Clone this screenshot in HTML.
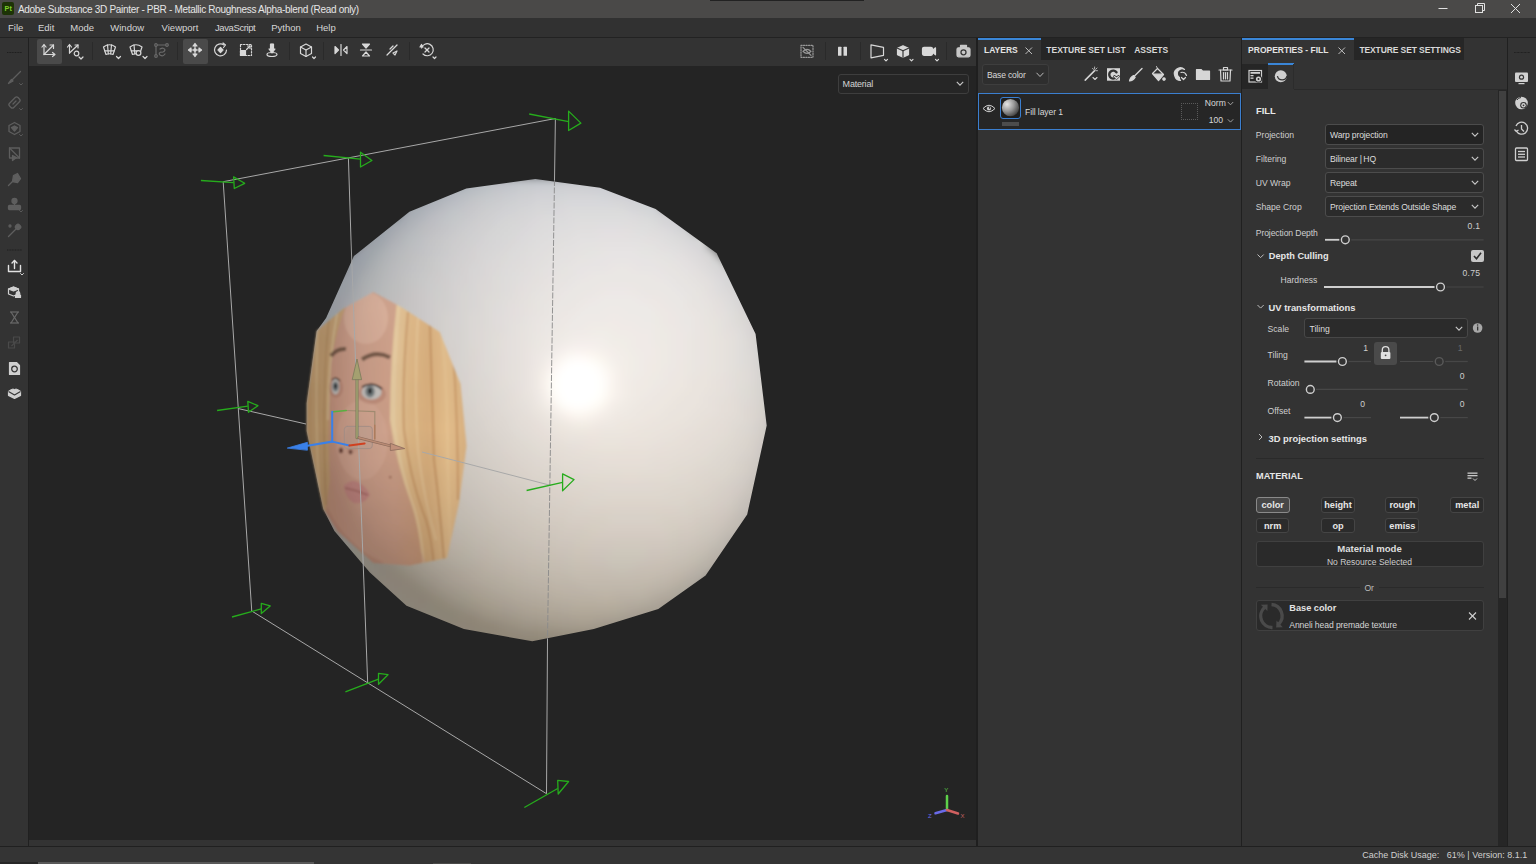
<!DOCTYPE html>
<html><head><meta charset="utf-8">
<style>
*{box-sizing:border-box;margin:0;padding:0}
html,body{width:1536px;height:864px;overflow:hidden;background:#333;font-family:"Liberation Sans",sans-serif;color:#d0d0d0}
.a{position:absolute}
.t{position:absolute;white-space:nowrap;line-height:1}
svg{position:absolute;overflow:visible}
</style></head><body>
<!-- title bar -->
<div class="a" style="left:0;top:0;width:1536px;height:18px;background:#4a4948"></div>
<div class="a" style="left:710px;top:0;width:154px;height:1px;background:#222"></div>
<div class="a" style="left:2px;top:2.3px;width:12px;height:12.3px;background:#1d3306;border-radius:2px"></div>
<div class="t" style="left:4.6px;top:4.8px;font-size:7.2px;font-weight:700;color:#7fd02a;letter-spacing:0.2px">Pt</div>
<div class="t" style="left:18px;top:5px;font-size:10px;color:#e6e6e6;letter-spacing:-0.31px">Adobe Substance 3D Painter - PBR - Metallic Roughness Alpha-blend (Read only)</div>
<!-- menu bar -->
<div class="a" style="left:0;top:18px;width:1536px;height:19px;background:#313131"></div>
<div class="a" style="left:0;top:37px;width:1536px;height:1px;background:#222"></div>
<div class="t" style="left:8px;top:23.2px;font-size:9.5px;color:#d6d6d6">File</div>
<div class="t" style="left:38px;top:23.2px;font-size:9.5px;color:#d6d6d6">Edit</div>
<div class="t" style="left:70.3px;top:23.2px;font-size:9.5px;color:#d6d6d6">Mode</div>
<div class="t" style="left:110.3px;top:23.2px;font-size:9.5px;color:#d6d6d6">Window</div>
<div class="t" style="left:161.6px;top:23.2px;font-size:9.5px;color:#d6d6d6">Viewport</div>
<div class="t" style="left:215px;top:23.2px;font-size:9.5px;color:#d6d6d6;letter-spacing:-0.4px">JavaScript</div>
<div class="t" style="left:271.2px;top:23.2px;font-size:9.5px;color:#d6d6d6">Python</div>
<div class="t" style="left:316.2px;top:23.2px;font-size:9.5px;color:#d6d6d6">Help</div>
<!-- window controls -->
<svg style="left:0;top:0" width="1536" height="18">
<g stroke="#e0e0e0" stroke-width="1" fill="none">
<line x1="1438.5" y1="8.5" x2="1447.5" y2="8.5"/>
<rect x="1475.5" y="5.5" width="7" height="7"/><polyline points="1477.5,5.5 1477.5,3.5 1484.5,3.5 1484.5,10.5 1482.5,10.5"/>
<line x1="1511" y1="4" x2="1520" y2="13"/><line x1="1520" y1="4" x2="1511" y2="13"/>
</g></svg>

<!-- left toolbar -->
<div class="a" style="left:0;top:38px;width:28px;height:808px;background:#333"></div>
<div class="a" style="left:28px;top:38px;width:1px;height:808px;background:#202020"></div>
<svg style="left:0;top:38px" width="28" height="400" viewBox="0 38 28 400">
<g stroke="#1e1e1e" stroke-width="1" stroke-dasharray="1,0.6"><line x1="7" y1="52.5" x2="22" y2="52.5"/><line x1="7" y1="250" x2="22" y2="250"/></g>
<g stroke="#5e5e5e" fill="none" stroke-width="1.3" stroke-linecap="round" stroke-linejoin="round">
<g transform="translate(14.5,77.5)"><line x1="-3" y1="3" x2="6" y2="-6"/><polygon points="-6,6 -3,2 -1.5,3.5" fill="#5e5e5e"/><polyline points="5,6 6.5,7.5 8,6" stroke-width="0.9"/></g>
<g transform="translate(14.5,102.5)"><rect x="-3" y="-6" width="6" height="12" rx="2" transform="rotate(45)"/><line x1="-1.5" y1="-1.5" x2="1.5" y2="1.5" transform="rotate(90)"/><polyline points="5,6 6.5,7.5 8,6" stroke-width="0.9"/></g>
<g transform="translate(14.5,128.5)"><polygon points="0,-6 5.5,-3 5.5,3 0,6 -5.5,3 -5.5,-3"/><polygon points="0,-2.5 3,-1 0,2.5 -3,-1" fill="#5e5e5e"/><polyline points="5,6 6.5,7.5 8,6" stroke-width="0.9"/></g>
<g transform="translate(14.5,153.5)"><rect x="-5" y="-5.5" width="10" height="10"/><line x1="-5" y1="-5.5" x2="5" y2="4.5"/><polygon points="-2,2 -2,7 2,4" fill="#5e5e5e"/></g>
<g transform="translate(14.5,179.5)"><polygon points="-1,-4 3,-6 6,-1 3,3 -2,2" fill="#5e5e5e"/><line x1="-2" y1="2" x2="-6" y2="6"/></g>
<g transform="translate(14.5,204.5)"><circle cx="0" cy="-3.5" r="2.5" fill="#5e5e5e"/><rect x="-6" y="1" width="12" height="4" rx="1" fill="#5e5e5e"/><line x1="0" y1="-1" x2="0" y2="1"/><polyline points="5,6 6.5,7.5 8,6" stroke-width="0.9"/></g>
<g transform="translate(14.5,230.5)"><line x1="-6" y1="6" x2="2" y2="-2"/><rect x="1" y="-6" width="5" height="5" rx="2" fill="#5e5e5e" transform="rotate(45 3.5 -3.5)"/><circle cx="-4.5" cy="-4.5" r="1"/></g>
</g>
<g stroke="#e2e2e2" fill="none" stroke-width="1.4" stroke-linecap="round" stroke-linejoin="round">
<g transform="translate(14.5,266.5)"><polyline points="-6,-1 -6,5 6,5 6,-1"/><line x1="0" y1="2" x2="0" y2="-6"/><polyline points="-2.5,-3.5 0,-6 2.5,-3.5"/><polyline points="6,7 7.5,8.5 9,7" stroke-width="0.9"/></g>
</g>
<g stroke="#d0d0d0" fill="#d0d0d0" stroke-width="1.2" stroke-linejoin="round">
<g transform="translate(14.5,292)"><polygon points="-6,-3 -1,-5 4,-3 4,2 -1,4 -6,2" fill="none"/><polygon points="-6,-3 -1,-5 4,-3 -1,-1"/><circle cx="3.5" cy="1.5" r="1.8"/><rect x="1" y="3" width="5" height="2.5"/></g>
<g transform="translate(14.5,317.5)" stroke="#6a6a6a" fill="none"><line x1="-4.5" y1="-5.5" x2="4.5" y2="-5.5"/><line x1="-4.5" y1="5.5" x2="4.5" y2="5.5"/><polyline points="-3.5,-5.5 3.5,5.5"/><polyline points="3.5,-5.5 -3.5,5.5"/></g>
<g transform="translate(14.5,343)" stroke="#4a4a4a" fill="none"><rect x="-6" y="-1" width="6" height="6"/><rect x="-1" y="-6" width="6" height="6"/><line x1="-3" y1="3" x2="3" y2="-3"/></g>
<g transform="translate(14.5,368.5)" fill="none"><path d="M-5,-6 L2,-6 L5,-3 L5,6 L-5,6 Z" fill="#d0d0d0"/><circle cx="0" cy="0.5" r="2.8" stroke="#373737" stroke-width="1.3"/></g>
<g transform="translate(14.5,393.5)"><path d="M-6,-2 Q-1,-6 0,-3 Q1,-6 6,-2 L6,2 L0,5 L-6,2 Z"/><path d="M-6,-2 L0,1.5 L6,-2" stroke="#373737" fill="none"/></g>
</g>
</svg>
<!-- top toolbar -->
<div class="a" style="left:29px;top:38px;width:947px;height:28px;background:#333"></div>
<div class="a" style="left:37px;top:38.5px;width:25px;height:25.5px;background:#4a4a4a;border-radius:2px"></div>
<div class="a" style="left:182.5px;top:38.5px;width:25px;height:25.5px;background:#4a4a4a;border-radius:2px"></div>
<svg style="left:0;top:38px" width="1536" height="28" viewBox="0 38 1536 28">
<g stroke="#2a2a2a" stroke-width="1">
<line x1="92.5" y1="42" x2="92.5" y2="60"/><line x1="177.5" y1="42" x2="177.5" y2="60"/>
<line x1="289.5" y1="42" x2="289.5" y2="60"/><line x1="323.5" y1="42" x2="323.5" y2="60"/>
<line x1="409.5" y1="42" x2="409.5" y2="60"/>
<line x1="825.5" y1="42" x2="825.5" y2="60"/><line x1="860.5" y1="42" x2="860.5" y2="60"/>
<line x1="946.5" y1="42" x2="946.5" y2="60"/>
</g>
<g stroke="#d8d8d8" stroke-width="1.2" fill="none" stroke-linecap="round" stroke-linejoin="round">
<!-- 1 transform -->
<g transform="translate(48.5,50)"><polyline points="-4.5,-5 -4.5,4.5 6,4.5"/><line x1="-4.5" y1="4.5" x2="5" y2="-5"/><polyline points="-6.5,-3 -4.5,-5.5 -2.5,-3"/><polyline points="4,2.5 6.5,4.5 4,6.5"/><polyline points="1.5,-5 5,-5 5,-1.5"/></g>
<!-- 2 -->
<g transform="translate(75,50)"><polyline points="-5.5,-5 -5.5,3"/><line x1="-5.5" y1="3" x2="3" y2="-5"/><polyline points="-7.5,-3 -5.5,-5.5 -3.5,-3"/><polyline points="0,-5 3,-5 3,-2"/><circle cx="1.5" cy="3.5" r="2.3"/><polyline points="4,7 6,9 8,7"/></g>
<!-- 3 uv fan -->
<g transform="translate(109.5,50)"><path d="M-6,-3 Q0,-7.5 6,-3 L3.5,4.5 Q0,3 -3.5,4.5 Z"/><line x1="-2" y1="-5.2" x2="-1.2" y2="3.8"/><line x1="2" y1="-5.2" x2="1.2" y2="3.8"/><line x1="-4.8" y1="0.8" x2="4.8" y2="0.8"/><polyline points="7,6.5 9,8.5 11,6.5"/></g>
<!-- 4 -->
<g transform="translate(136,50)"><path d="M-6,-3 Q0,-7.5 6,-3 L3.5,4.5 Q0,3 -3.5,4.5 Z"/><line x1="-2" y1="-5.2" x2="-1.2" y2="3.8"/><line x1="-4.8" y1="0.8" x2="2" y2="0.8"/><circle cx="2.5" cy="3" r="2.4" fill="#353535"/><polyline points="7,6.5 9,8.5 11,6.5"/></g>
<!-- 5 dim path -->
<g transform="translate(161,50)" stroke="#6a6a6a"><circle cx="-5" cy="-5" r="1.3"/><circle cx="6" cy="-5" r="1.3"/><circle cx="-5" cy="6" r="1.3"/><line x1="-3.5" y1="-5" x2="4.5" y2="-5"/><line x1="-5" y1="-3.5" x2="-5" y2="4.5"/><path d="M-1,-1 Q3,-3 4,0 Q3,3 0,2 Q-3,3 -1,5 Q2,7 4,4"/></g>
<!-- 6 move -->
<g transform="translate(195,50)"><line x1="-6" y1="0" x2="6" y2="0"/><line x1="0" y1="-6" x2="0" y2="6"/><polygon points="-6.5,0 -4,-2 -4,2" fill="#d8d8d8"/><polygon points="6.5,0 4,-2 4,2" fill="#d8d8d8"/><polygon points="0,-6.5 -2,-4 2,-4" fill="#d8d8d8"/><polygon points="0,6.5 -2,4 2,4" fill="#d8d8d8"/><circle cx="0" cy="0" r="1.2" fill="#d8d8d8"/></g>
<!-- 7 rotate -->
<g transform="translate(220.5,50)"><path d="M3.5,-5 A6,6 0 1 0 6,0"/><polyline points="2.5,-7 5,-5 3,-2.5"/><polygon points="0,-2.5 2.5,0 0,2.5 -2.5,0" fill="#d8d8d8"/></g>
<!-- 8 scale -->
<g transform="translate(246,50)"><rect x="-5.5" y="-5.5" width="11" height="11" stroke-dasharray="1.5,1.5"/><rect x="-5.5" y="0.5" width="5" height="5" fill="#d8d8d8"/><line x1="0.5" y1="-0.5" x2="4" y2="-4"/><polyline points="1.5,-4 4,-4 4,-1.5"/></g>
<!-- 9 download -->
<g transform="translate(272,50)"><line x1="0" y1="-6" x2="0" y2="1"/><polygon points="-3,-1 3,-1 0,3" fill="#d8d8d8"/><rect x="-1.5" y="-6" width="3" height="5" fill="#d8d8d8"/><ellipse cx="0" cy="4.5" rx="5" ry="2"/></g>
<!-- 10 cube -->
<g transform="translate(306,50)"><polygon points="0,-6 5.5,-3 5.5,3.5 0,6.5 -5.5,3.5 -5.5,-3"/><polyline points="-5.5,-3 0,0 5.5,-3"/><line x1="0" y1="0" x2="0" y2="6.5"/><polyline points="6.5,7 8,8.5 9.5,7"/></g>
<!-- 11 mirror -->
<g transform="translate(341,50)"><polygon points="-6,-3.5 -2.5,0 -6,3.5" fill="#d8d8d8"/><line x1="0" y1="-5.5" x2="0" y2="5.5"/><polygon points="6,-3.5 2.5,0 6,3.5"/></g>
<!-- 12 -->
<g transform="translate(366,50)"><polygon points="-3.5,-6 3.5,-6 0,-2" fill="#d8d8d8"/><line x1="-5.5" y1="0" x2="5.5" y2="0"/><polygon points="-3.5,6 3.5,6 0,2"/></g>
<!-- 13 -->
<g transform="translate(392,50)"><line x1="-5" y1="5" x2="5" y2="-5"/><line x1="-2" y1="-1" x2="1" y2="-4"/><polygon points="1,3 5,1 3,5"/></g>
<!-- 14 clock-x -->
<g transform="translate(427,50)"><path d="M-5.5,-2 A6,6 0 1 1 -4,4"/><polygon points="-7,-3 -4,-3 -5.5,-5.5" fill="#d8d8d8"/><line x1="-2" y1="-2" x2="2" y2="2"/><line x1="2" y1="-2" x2="-2" y2="2"/><polyline points="6,7 7.5,8.5 9,7"/></g>
<!-- right side -->
<g transform="translate(807,51.3)" stroke="#9a9a9a"><rect x="-6" y="-6" width="12" height="12" stroke-dasharray="1.2,1.3"/><path d="M-4,0 Q0,-4 4,0 Q0,4 -4,0"/><line x1="-4" y1="-4" x2="4" y2="4"/></g>
<g transform="translate(842.5,51.3)" fill="#d8d8d8" stroke="none"><rect x="-4.5" y="-4.5" width="3.5" height="9" rx="0.5"/><rect x="1" y="-4.5" width="3.5" height="9" rx="0.5"/></g>
<g transform="translate(877.5,51.3)"><polygon points="-6.5,-6.5 6,-4 6,4 -6.5,6.5"/><polyline points="7,8 8.5,9.5 10,8"/></g>
<g transform="translate(903,51.3)"><polygon points="0,-5.5 5.5,-3 5.5,3.5 0,6 -5.5,3.5 -5.5,-3" fill="#d8d8d8"/><polyline points="-5.5,-3 0,-0.5 5.5,-3" stroke="#353535"/><line x1="0" y1="-0.5" x2="0" y2="6" stroke="#353535"/><polyline points="7,8 8.5,9.5 10,8"/></g>
<g transform="translate(928.5,51.3)"><rect x="-6" y="-4" width="10" height="8" rx="1.5" fill="#d8d8d8"/><polygon points="4,-1 7,-3.5 7,3.5 4,1" fill="#d8d8d8"/><polyline points="7,8 8.5,9.5 10,8"/></g>
<g transform="translate(963.5,51.3)"><rect x="-6.5" y="-3.5" width="13" height="9" rx="1.5" fill="#c8c8c8" stroke="#c8c8c8"/><rect x="-3" y="-6" width="6" height="3" fill="#c8c8c8" stroke="#c8c8c8"/><circle cx="0" cy="1" r="2.5" stroke="#353535" stroke-width="1.3"/></g>
</g>
</svg>
<!-- viewport -->
<div class="a" style="left:29px;top:66px;width:947px;height:774px;background:#242424"></div>
<div class="a" style="left:29px;top:840px;width:947px;height:6px;background:#333"></div>
<!--VP_START-->
<svg style="left:0;top:0" width="1536" height="864" viewBox="0 0 1536 864">
<defs>
<linearGradient id="sbase" gradientUnits="userSpaceOnUse" x1="390" y1="230" x2="690" y2="610">
<stop offset="0" stop-color="#c6c7ca"/>
<stop offset="0.4" stop-color="#d3d2d0"/>
<stop offset="0.75" stop-color="#dcd6ce"/>
<stop offset="1" stop-color="#d8d0c6"/>
</linearGradient>
<radialGradient id="shl" gradientUnits="userSpaceOnUse" cx="578" cy="386" r="240">
<stop offset="0" stop-color="#ffffff" stop-opacity="1"/>
<stop offset="0.07" stop-color="#fffef9" stop-opacity="1"/>
<stop offset="0.13" stop-color="#fdf8ee" stop-opacity="0.8"/>
<stop offset="0.22" stop-color="#f8f2e8" stop-opacity="0.6"/>
<stop offset="0.45" stop-color="#f0eae2" stop-opacity="0.38"/>
<stop offset="0.75" stop-color="#ece6de" stop-opacity="0.16"/>
<stop offset="1" stop-color="#e8e2da" stop-opacity="0"/>
</radialGradient>
<radialGradient id="sdark" gradientUnits="userSpaceOnUse" cx="420" cy="600" r="150">
<stop offset="0" stop-color="#a8a4a0" stop-opacity="0.35"/>
<stop offset="0.6" stop-color="#a8a4a0" stop-opacity="0.15"/>
<stop offset="1" stop-color="#a8a4a0" stop-opacity="0"/>
</radialGradient>
<radialGradient id="srim" gradientUnits="userSpaceOnUse" cx="536" cy="410" r="232">
<stop offset="0.86" stop-color="#dfe4ee" stop-opacity="0"/>
<stop offset="0.95" stop-color="#dfe4ee" stop-opacity="0.35"/>
<stop offset="1" stop-color="#d8deea" stop-opacity="0.55"/>
</radialGradient>
<linearGradient id="rimmask" gradientUnits="userSpaceOnUse" x1="400" y1="180" x2="560" y2="520">
<stop offset="0" stop-color="#fff"/>
<stop offset="0.5" stop-color="#fff" stop-opacity="0.7"/>
<stop offset="1" stop-color="#fff" stop-opacity="0"/>
</linearGradient>
<mask id="rmask" maskUnits="userSpaceOnUse" x="280" y="160" width="520" height="500"><rect x="280" y="160" width="520" height="500" fill="url(#rimmask)"/></mask>
<linearGradient id="fskin" gradientUnits="userSpaceOnUse" x1="305" y1="0" x2="467" y2="0">
<stop offset="0" stop-color="#c49a70"/>
<stop offset="0.18" stop-color="#cf9c86"/>
<stop offset="0.35" stop-color="#d6a690"/>
<stop offset="0.55" stop-color="#d4a48c"/>
<stop offset="0.7" stop-color="#cc9c7c"/>
<stop offset="1" stop-color="#c49870"/>
</linearGradient>
<linearGradient id="fvert" gradientUnits="userSpaceOnUse" x1="0" y1="293" x2="0" y2="566">
<stop offset="0" stop-color="#ffffff" stop-opacity="0.06"/>
<stop offset="0.5" stop-color="#000000" stop-opacity="0"/>
<stop offset="1" stop-color="#604030" stop-opacity="0.1"/>
</linearGradient>
<linearGradient id="hairR" gradientUnits="userSpaceOnUse" x1="390" y1="0" x2="466" y2="0">
<stop offset="0" stop-color="#ecd0a4"/>
<stop offset="0.25" stop-color="#dfb886"/>
<stop offset="0.5" stop-color="#d8ae7c"/>
<stop offset="0.75" stop-color="#e2bc8a"/>
<stop offset="1" stop-color="#d8b080"/>
</linearGradient>
<clipPath id="fclip"><polygon points="373.3,292.0 401.1,307.0 439.7,332.0 460.5,384.0 466.5,446.0 459.0,503.0 447.0,558.0 409.4,565.6 373.3,563.0 337.2,531.1 323.3,508.9 306.7,431.1 306.7,403.3 316.7,331.1 342.8,308.9"/></clipPath>
<filter id="blur1" x="-10%" y="-10%" width="120%" height="120%"><feGaussianBlur stdDeviation="0.9"/></filter>
<filter id="blur2" x="-10%" y="-10%" width="120%" height="120%"><feGaussianBlur stdDeviation="1.6"/></filter>
<clipPath id="vpc"><rect x="29" y="66" width="947" height="774"/></clipPath>
</defs>
<g clip-path="url(#vpc)">
<clipPath id="sclip"><polygon points="535.3,178.9 600.0,187.8 655.6,208.9 716.7,253.3 755.6,333.9 766.7,425.6 747.2,514.4 705.6,575.6 658.3,608.9 593.8,629.0 532.3,641.3 463.9,629.0 406.5,605.8 369.9,572.6 334.4,531.1 323.3,508.9 306.7,431.1 306.7,403.3 316.7,331.1 326.1,318.0 353.9,256.1 409.4,211.7 466.3,188.5"/></clipPath><filter id="sblur" x="280" y="150" width="520" height="520" filterUnits="userSpaceOnUse"><feGaussianBlur stdDeviation="5"/></filter>
<g clip-path="url(#sclip)"><g filter="url(#sblur)"><path fill="#b4bac0" d="M462 176h8v8h-8zM470 184h8v8h-8z"/><path fill="#b7bac0" d="M470 176h8v8h-8zM454 192h8v8h-8zM430 208h8v8h-8zM422 216h8v8h-8z"/><path fill="#b7bdc3" d="M478 176h8v8h-8z"/><path fill="#babdc3" d="M486 176h8v8h-8zM478 184h8v8h-8zM446 200h8v8h-8z"/><path fill="#babdc6" d="M494 176h8v8h-8z"/><path fill="#bdc0c6" d="M502 176h16v8h-16zM454 200h8v8h-8z"/><path fill="#c0c3c9" d="M518 176h16v8h-16z"/><path fill="#c0c6cc" d="M534 176h8v8h-8z"/><path fill="#c3c6cc" d="M542 176h16v8h-16zM502 184h8v8h-8z"/><path fill="#c6c9cf" d="M558 176h24v8h-24z"/><path fill="#c9cccf" d="M582 176h8v8h-8zM518 184h16v8h-16zM502 192h8v8h-8zM486 200h8v8h-8z"/><path fill="#c9ccd2" d="M590 176h16v8h-16z"/><path fill="#ccccd2" d="M606 176h8v8h-8zM534 184h8v8h-8zM590 184h16v8h-16zM510 192h8v8h-8z"/><path fill="#aeb4ba" d="M438 184h8v8h-8zM438 192h8v8h-8z"/><path fill="#b1b4bd" d="M446 184h8v8h-8zM446 192h8v8h-8z"/><path fill="#b1b7bd" d="M454 184h8v8h-8z"/><path fill="#b4b7c0" d="M462 184h8v8h-8z"/><path fill="#bdc3c6" d="M486 184h8v8h-8z"/><path fill="#c3c3c9" d="M494 184h8v8h-8zM462 200h8v8h-8z"/><path fill="#c6c9cc" d="M510 184h8v8h-8zM486 192h8v8h-8z"/><path fill="#cccfd2" d="M542 184h16v8h-16zM582 184h8v8h-8zM606 184h24v8h-24z"/><path fill="#cfcfd2" d="M558 184h24v8h-24zM518 192h16v8h-16zM502 200h8v8h-8zM494 208h8v8h-8zM486 216h8v8h-8zM470 232h8v8h-8z"/><path fill="#cfcfd5" d="M630 184h8v8h-8zM614 192h24v8h-24z"/><path fill="#abb1b7" d="M422 192h8v8h-8zM430 200h8v8h-8z"/><path fill="#aeb1ba" d="M430 192h8v8h-8z"/><path fill="#bac0c3" d="M462 192h8v8h-8z"/><path fill="#c0c3c6" d="M470 192h8v8h-8zM446 208h8v8h-8zM438 216h8v8h-8z"/><path fill="#c3c6c9" d="M478 192h8v8h-8zM454 208h8v8h-8zM446 216h8v8h-8z"/><path fill="#c9c9cc" d="M494 192h8v8h-8zM478 200h8v8h-8zM470 208h8v8h-8zM462 216h8v8h-8zM454 224h8v8h-8zM446 232h8v8h-8zM438 248h8v8h-8z"/><path fill="#d2d2d5" d="M534 192h24v8h-24zM606 192h8v8h-8zM518 200h16v8h-16zM630 200h8v8h-8zM654 200h8v8h-8zM502 208h16v8h-16zM654 208h24v8h-24zM494 216h8v8h-8zM662 216h24v8h-24zM678 224h8v8h-8z"/><path fill="#d2d5d8" d="M558 192h8v8h-8zM598 192h8v8h-8zM646 208h8v8h-8z"/><path fill="#d5d5d8" d="M566 192h32v8h-32zM534 200h24v8h-24zM622 200h8v8h-8zM526 208h8v8h-8zM670 224h8v8h-8z"/><path fill="#cfd2d5" d="M638 192h16v8h-16zM638 200h16v8h-16z"/><path fill="#a8abb4" d="M406 200h8v8h-8z"/><path fill="#a8aeb4" d="M414 200h8v8h-8zM414 208h8v8h-8z"/><path fill="#abaeb7" d="M422 200h8v8h-8z"/><path fill="#b4b7bd" d="M438 200h8v8h-8z"/><path fill="#c6c6c9" d="M470 200h8v8h-8zM462 208h8v8h-8zM446 224h8v8h-8zM438 232h8v8h-8zM430 248h8v8h-8z"/><path fill="#cccccf" d="M494 200h8v8h-8zM478 208h8v8h-8zM470 216h8v8h-8zM462 224h8v8h-8z"/><path fill="#cfd2d2" d="M510 200h8v8h-8z"/><path fill="#d8d8d8" d="M558 200h8v8h-8zM614 200h8v8h-8zM534 208h16v8h-16zM638 208h8v8h-8zM526 216h8v8h-8zM654 216h8v8h-8zM510 224h16v8h-16zM502 232h16v8h-16zM678 232h8v8h-8zM502 240h8v8h-8zM494 248h8v8h-8zM486 256h8v8h-8zM710 264h8v8h-8z"/><path fill="#d8d8db" d="M566 200h48v8h-48zM550 208h8v8h-8zM630 208h8v8h-8zM686 240h8v8h-8z"/><path fill="#a5abb1" d="M398 208h8v8h-8z"/><path fill="#a5abb4" d="M406 208h8v8h-8z"/><path fill="#b1b4ba" d="M422 208h8v8h-8zM414 216h8v8h-8zM406 224h8v8h-8z"/><path fill="#bdbdc3" d="M438 208h8v8h-8zM430 216h8v8h-8z"/><path fill="#cfcfcf" d="M486 208h8v8h-8zM478 216h8v8h-8zM470 224h8v8h-8zM462 232h8v8h-8zM462 240h8v8h-8zM454 248h8v8h-8zM446 264h8v8h-8zM446 272h8v8h-8z"/><path fill="#d5d5d5" d="M518 208h8v8h-8zM502 216h16v8h-16zM494 224h16v8h-16zM486 232h16v8h-16zM686 232h24v8h-24zM486 240h8v8h-8zM694 240h16v8h-16zM478 248h8v8h-8zM702 248h16v8h-16zM710 256h16v8h-16zM470 264h8v8h-8zM718 264h16v8h-16zM726 272h16v8h-16zM726 280h16v8h-16zM734 288h16v8h-16zM734 296h16v8h-16z"/><path fill="#dbd8db" d="M558 208h8v8h-8zM534 216h8v8h-8zM526 224h8v8h-8zM662 224h8v8h-8zM518 232h8v8h-8zM694 248h8v8h-8z"/><path fill="#dbdbdb" d="M566 208h64v8h-64zM542 216h24v8h-24zM638 216h16v8h-16zM534 224h8v8h-8zM654 224h8v8h-8zM526 232h8v8h-8zM670 232h8v8h-8zM518 240h8v8h-8zM510 248h8v8h-8zM718 280h8v8h-8z"/><path fill="#9fa5ae" d="M382 216h8v8h-8z"/><path fill="#a2a8ae" d="M390 216h8v8h-8z"/><path fill="#a2a8b1" d="M398 216h8v8h-8z"/><path fill="#abaeb4" d="M406 216h8v8h-8zM398 224h8v8h-8zM390 232h8v8h-8z"/><path fill="#c6c9c9" d="M454 216h8v8h-8z"/><path fill="#d8d5d8" d="M518 216h8v8h-8zM494 240h8v8h-8zM718 272h8v8h-8z"/><path fill="#dedbde" d="M566 216h8v8h-8zM630 216h8v8h-8zM550 224h8v8h-8z"/><path fill="#dedede" d="M574 216h56v8h-56zM558 224h16v8h-16zM638 224h16v8h-16zM542 232h16v8h-16zM662 232h8v8h-8zM534 240h8v8h-8zM670 240h8v8h-8z"/><path fill="#9fa2ab" d="M374 224h8v8h-8z"/><path fill="#9fa5ab" d="M382 224h8v8h-8zM382 232h8v8h-8z"/><path fill="#a2a5ae" d="M390 224h8v8h-8z"/><path fill="#b7babd" d="M414 224h8v8h-8zM406 232h8v8h-8z"/><path fill="#bdbdc0" d="M422 224h8v8h-8zM406 248h8v8h-8zM398 264h8v8h-8z"/><path fill="#c0c0c3" d="M430 224h8v8h-8zM422 232h8v8h-8zM414 248h8v8h-8zM406 264h8v8h-8z"/><path fill="#c3c3c6" d="M438 224h8v8h-8zM430 232h8v8h-8zM422 240h8v8h-8zM422 248h8v8h-8zM414 264h8v8h-8z"/><path fill="#d2cfd2" d="M478 224h8v8h-8zM462 248h8v8h-8z"/><path fill="#d2d2d2" d="M486 224h8v8h-8zM478 232h8v8h-8zM470 240h8v8h-8zM462 256h8v8h-8zM454 272h8v8h-8z"/><path fill="#dedbdb" d="M542 224h8v8h-8zM534 232h8v8h-8zM526 240h8v8h-8zM678 240h8v8h-8zM518 248h8v8h-8zM686 248h8v8h-8zM510 256h16v8h-16zM694 256h8v8h-8zM502 264h16v8h-16zM702 264h8v8h-8zM502 272h8v8h-8zM710 272h8v8h-8zM502 280h8v8h-8zM502 288h8v8h-8zM718 288h8v8h-8zM726 296h8v8h-8zM494 304h8v8h-8z"/><path fill="#e1dede" d="M574 224h24v8h-24zM622 224h16v8h-16zM558 232h16v8h-16zM646 232h16v8h-16zM542 240h16v8h-16zM662 240h8v8h-8zM534 248h16v8h-16zM678 248h8v8h-8zM526 256h16v8h-16zM686 256h8v8h-8zM526 264h8v8h-8zM694 264h8v8h-8zM518 272h16v8h-16zM702 272h8v8h-8zM518 280h8v8h-8zM710 280h8v8h-8zM710 288h8v8h-8z"/><path fill="#e1dee1" d="M598 224h24v8h-24z"/><path fill="#d2d5d5" d="M686 224h8v8h-8z"/><path fill="#9ca2a8" d="M366 232h8v8h-8zM358 240h24v8h-24zM366 248h8v8h-8z"/><path fill="#9ca2ab" d="M374 232h8v8h-8z"/><path fill="#b1b4b7" d="M398 232h8v8h-8zM382 256h8v8h-8z"/><path fill="#babdc0" d="M414 232h8v8h-8zM406 240h8v8h-8z"/><path fill="#cccccc" d="M454 232h8v8h-8zM446 240h8v8h-8zM446 248h8v8h-8zM438 256h8v8h-8zM438 264h8v8h-8zM430 280h8v8h-8zM430 288h8v8h-8z"/><path fill="#e1e1e1" d="M574 232h24v8h-24zM630 232h16v8h-16zM566 240h8v8h-8zM654 240h8v8h-8zM670 248h8v8h-8z"/><path fill="#e4e1e1" d="M598 232h32v8h-32zM574 240h80v8h-80zM558 248h24v8h-24zM654 248h16v8h-16zM550 256h24v8h-24zM670 256h16v8h-16zM542 264h16v8h-16zM678 264h16v8h-16zM542 272h8v8h-8zM686 272h8v8h-8zM694 280h8v8h-8zM534 288h8v8h-8z"/><path fill="#a8abb1" d="M382 240h8v8h-8z"/><path fill="#b1b1b7" d="M390 240h8v8h-8z"/><path fill="#b4b7ba" d="M398 240h8v8h-8zM390 248h8v8h-8z"/><path fill="#bdc0c3" d="M414 240h8v8h-8z"/><path fill="#c6c6c6" d="M430 240h8v8h-8zM422 256h8v8h-8zM422 264h8v8h-8zM414 272h8v8h-8zM414 280h8v8h-8z"/><path fill="#c9c9c9" d="M438 240h8v8h-8zM430 256h8v8h-8zM430 264h8v8h-8zM422 272h8v8h-8zM422 280h8v8h-8z"/><path fill="#cfcccf" d="M454 240h8v8h-8zM446 256h8v8h-8z"/><path fill="#d5d2d5" d="M478 240h8v8h-8z"/><path fill="#dbd8d8" d="M510 240h8v8h-8zM502 248h8v8h-8zM494 256h8v8h-8zM702 256h8v8h-8zM486 264h16v8h-16zM486 272h8v8h-8zM486 280h8v8h-8zM486 288h8v8h-8zM726 288h8v8h-8zM734 304h8v8h-8zM742 328h8v8h-8z"/><path fill="#e1e1de" d="M558 240h8v8h-8zM550 248h8v8h-8zM542 256h8v8h-8zM534 264h8v8h-8z"/><path fill="#999fa8" d="M350 248h8v8h-8zM358 256h8v8h-8z"/><path fill="#9c9fa8" d="M358 248h8v8h-8z"/><path fill="#a5abae" d="M374 248h8v8h-8z"/><path fill="#aeb1b4" d="M382 248h8v8h-8zM374 264h8v8h-8z"/><path fill="#bababd" d="M398 248h8v8h-8zM390 264h8v8h-8zM390 272h8v8h-8z"/><path fill="#d5d2d2" d="M470 248h8v8h-8zM470 256h8v8h-8zM462 264h8v8h-8zM462 272h8v8h-8zM454 280h16v8h-16zM454 288h8v8h-8zM454 296h8v8h-8zM454 304h8v8h-8zM742 304h16v8h-16zM454 312h8v8h-8zM750 312h8v8h-8zM454 320h8v8h-8zM750 320h16v8h-16zM750 328h16v8h-16z"/><path fill="#d8d5d5" d="M486 248h8v8h-8zM478 256h8v8h-8zM478 264h8v8h-8zM470 272h16v8h-16zM470 280h8v8h-8zM470 288h8v8h-8zM470 296h8v8h-8zM470 304h8v8h-8zM750 344h8v8h-8z"/><path fill="#dededb" d="M526 248h8v8h-8zM510 272h8v8h-8zM726 304h8v8h-8z"/><path fill="#e4e4e1" d="M582 248h16v8h-16zM638 248h16v8h-16zM662 256h8v8h-8zM558 264h8v8h-8z"/><path fill="#e7e4e1" d="M598 248h8v8h-8zM574 256h16v8h-16zM654 256h8v8h-8zM566 264h8v8h-8zM662 264h16v8h-16zM558 272h16v8h-16zM670 272h16v8h-16zM550 280h16v8h-16zM678 280h16v8h-16zM542 288h16v8h-16zM686 288h16v8h-16zM534 296h16v8h-16zM686 296h16v8h-16zM534 304h16v8h-16zM694 304h16v8h-16zM534 312h8v8h-8zM702 312h8v8h-8zM526 320h8v8h-8zM702 320h8v8h-8zM526 328h8v8h-8zM526 336h8v8h-8z"/><path fill="#e7e4e4" d="M606 248h32v8h-32zM590 256h64v8h-64zM574 264h32v8h-32zM638 264h24v8h-24zM574 272h8v8h-8zM662 272h8v8h-8zM566 280h8v8h-8zM670 280h8v8h-8zM678 288h8v8h-8z"/><path fill="#999fa5" d="M342 256h16v8h-16zM342 264h16v8h-16zM350 272h8v8h-8z"/><path fill="#a2a8ab" d="M366 256h8v8h-8z"/><path fill="#abaeb1" d="M374 256h8v8h-8zM366 272h8v8h-8z"/><path fill="#b7b7ba" d="M390 256h8v8h-8zM382 272h8v8h-8z"/><path fill="#babdbd" d="M398 256h8v8h-8z"/><path fill="#c0c0c0" d="M406 256h8v8h-8zM398 272h8v8h-8zM398 280h8v8h-8zM398 288h8v8h-8z"/><path fill="#c3c3c3" d="M414 256h8v8h-8zM406 272h8v8h-8zM406 280h8v8h-8z"/><path fill="#d2cfcf" d="M454 256h8v8h-8zM454 264h8v8h-8zM446 280h8v8h-8zM446 288h8v8h-8zM446 296h8v8h-8zM446 304h8v8h-8zM766 352h8v8h-8zM758 360h16v8h-16z"/><path fill="#dbdbd8" d="M502 256h8v8h-8zM494 272h8v8h-8z"/><path fill="#9fa2a8" d="M358 264h8v8h-8zM350 280h8v8h-8z"/><path fill="#a8abae" d="M366 264h8v8h-8zM358 280h8v8h-8z"/><path fill="#b4b7b7" d="M382 264h8v8h-8zM374 288h8v8h-8z"/><path fill="#e1dedb" d="M518 264h8v8h-8zM510 280h8v8h-8zM510 288h8v8h-8zM502 296h16v8h-16zM718 296h8v8h-8zM502 304h8v8h-8zM502 312h8v8h-8zM726 312h8v8h-8zM502 320h8v8h-8zM726 320h8v8h-8zM502 328h8v8h-8zM734 328h8v8h-8zM734 336h8v8h-8zM734 344h8v8h-8zM734 352h8v8h-8zM734 360h8v8h-8z"/><path fill="#eae4e4" d="M606 264h8v8h-8zM630 264h8v8h-8zM582 272h8v8h-8zM654 272h8v8h-8zM558 288h8v8h-8z"/><path fill="#eae7e4" d="M614 264h16v8h-16zM590 272h64v8h-64zM574 280h96v8h-96zM566 288h32v8h-32zM638 288h40v8h-40zM558 296h24v8h-24zM662 296h24v8h-24zM550 304h24v8h-24zM670 304h16v8h-16zM550 312h8v8h-8zM678 312h16v8h-16zM542 320h16v8h-16zM678 320h16v8h-16zM542 328h8v8h-8zM686 328h8v8h-8z"/><path fill="#999ca2" d="M334 272h8v8h-8zM342 288h8v8h-8z"/><path fill="#999ca5" d="M342 272h8v8h-8z"/><path fill="#a5a8ab" d="M358 272h8v8h-8zM350 296h8v8h-8z"/><path fill="#b1b4b4" d="M374 272h8v8h-8z"/><path fill="#ccc9c9" d="M430 272h8v8h-8zM422 288h8v8h-8zM422 296h8v8h-8zM422 304h8v8h-8zM422 312h8v8h-8zM422 320h8v8h-8zM422 328h8v8h-8zM422 336h8v8h-8z"/><path fill="#cfcccc" d="M438 272h8v8h-8zM438 280h8v8h-8zM430 296h8v8h-8zM430 304h8v8h-8zM430 312h8v8h-8z"/><path fill="#e4e1de" d="M534 272h8v8h-8zM694 272h8v8h-8zM526 280h16v8h-16zM702 280h8v8h-8zM526 288h8v8h-8zM702 288h8v8h-8zM518 296h16v8h-16zM710 296h8v8h-8zM518 304h8v8h-8zM710 304h8v8h-8zM518 312h8v8h-8zM718 312h8v8h-8zM510 320h16v8h-16zM718 320h8v8h-8zM510 328h8v8h-8zM718 328h8v8h-8zM510 336h8v8h-8zM510 344h8v8h-8zM510 352h8v8h-8z"/><path fill="#e7e1e1" d="M550 272h8v8h-8zM542 280h8v8h-8zM702 296h8v8h-8zM526 312h8v8h-8z"/><path fill="#969ca2" d="M326 280h24v8h-24zM326 288h16v8h-16z"/><path fill="#aeb1b1" d="M366 280h8v8h-8z"/><path fill="#b4b4b7" d="M374 280h8v8h-8z"/><path fill="#b7baba" d="M382 280h8v8h-8z"/><path fill="#bdbdbd" d="M390 280h8v8h-8zM390 288h8v8h-8z"/><path fill="#dbd8d5" d="M478 280h8v8h-8zM478 288h8v8h-8zM478 296h8v8h-8zM478 304h8v8h-8zM470 312h16v8h-16zM470 320h16v8h-16zM742 320h8v8h-8zM470 328h8v8h-8zM470 336h8v8h-8zM750 352h8v8h-8zM750 360h8v8h-8zM478 368h8v8h-8zM750 368h8v8h-8zM750 376h8v8h-8z"/><path fill="#dedbd8" d="M494 280h8v8h-8zM494 288h8v8h-8zM486 296h16v8h-16zM486 304h8v8h-8zM486 312h8v8h-8zM734 312h8v8h-8zM486 320h8v8h-8zM734 320h8v8h-8zM486 328h8v8h-8zM486 336h8v8h-8zM742 336h8v8h-8zM486 344h8v8h-8zM742 344h8v8h-8zM486 352h8v8h-8zM742 352h8v8h-8zM742 360h8v8h-8z"/><path fill="#a2a5a8" d="M350 288h8v8h-8z"/><path fill="#ababae" d="M358 288h8v8h-8z"/><path fill="#b1b1b4" d="M366 288h8v8h-8zM366 296h8v8h-8z"/><path fill="#bababa" d="M382 288h8v8h-8zM382 296h8v8h-8z"/><path fill="#c6c3c3" d="M406 288h8v8h-8zM406 296h8v8h-8zM406 304h8v8h-8zM406 352h8v8h-8z"/><path fill="#c9c6c6" d="M414 288h8v8h-8zM414 296h8v8h-8zM414 304h8v8h-8zM414 312h8v8h-8zM414 320h8v8h-8zM414 328h8v8h-8zM414 336h8v8h-8zM414 344h8v8h-8z"/><path fill="#cfcfcc" d="M438 288h8v8h-8zM438 296h8v8h-8z"/><path fill="#d5d5d2" d="M462 288h8v8h-8zM742 312h8v8h-8z"/><path fill="#e4dede" d="M518 288h8v8h-8zM510 304h8v8h-8zM718 304h8v8h-8zM510 312h8v8h-8z"/><path fill="#ede7e4" d="M598 288h8v8h-8zM630 288h8v8h-8zM582 296h8v8h-8zM646 296h16v8h-16zM574 304h8v8h-8zM654 304h16v8h-16zM558 312h16v8h-16zM662 312h16v8h-16zM558 320h8v8h-8zM662 320h16v8h-16zM550 328h8v8h-8zM670 328h16v8h-16zM542 336h8v8h-8zM670 336h16v8h-16zM542 344h8v8h-8zM670 344h16v8h-16zM534 352h8v8h-8zM670 352h16v8h-16zM534 360h8v8h-8zM670 360h8v8h-8zM662 368h16v8h-16zM662 376h8v8h-8zM654 384h8v8h-8zM534 392h8v8h-8zM646 392h8v8h-8z"/><path fill="#ede7e7" d="M606 288h24v8h-24zM590 296h8v8h-8zM638 296h8v8h-8z"/><path fill="#96999f" d="M318 296h24v8h-24zM318 304h24v8h-24z"/><path fill="#9f9fa5" d="M342 296h8v8h-8z"/><path fill="#abaeae" d="M358 296h8v8h-8z"/><path fill="#b7b7b7" d="M374 296h8v8h-8zM374 304h8v8h-8z"/><path fill="#c0bdbd" d="M390 296h8v8h-8zM390 304h8v8h-8zM390 360h8v8h-8z"/><path fill="#c3c0c0" d="M398 296h8v8h-8zM398 352h8v8h-8z"/><path fill="#d8d5d2" d="M462 296h8v8h-8zM462 304h8v8h-8zM462 312h8v8h-8zM462 320h8v8h-8zM462 328h8v8h-8zM462 336h8v8h-8zM750 336h8v8h-8zM462 344h8v8h-8zM462 352h8v8h-8z"/><path fill="#eae4e1" d="M550 296h8v8h-8zM686 304h8v8h-8zM542 312h8v8h-8zM694 312h8v8h-8zM534 320h8v8h-8zM694 320h8v8h-8zM534 328h8v8h-8zM694 328h16v8h-16zM694 336h16v8h-16zM526 344h8v8h-8zM694 344h16v8h-16zM526 352h8v8h-8zM694 352h16v8h-16zM526 360h8v8h-8zM694 360h16v8h-16zM526 368h8v8h-8zM694 368h8v8h-8zM526 376h8v8h-8zM686 376h8v8h-8zM526 384h8v8h-8z"/><path fill="#edeae7" d="M598 296h40v8h-40zM582 304h72v8h-72zM574 312h32v8h-32zM622 312h32v8h-32zM566 320h16v8h-16zM638 320h16v8h-16z"/><path fill="#a2a2a5" d="M342 304h8v8h-8z"/><path fill="#a8a8ab" d="M350 304h8v8h-8z"/><path fill="#aeaeb1" d="M358 304h8v8h-8zM358 312h8v8h-8z"/><path fill="#b4b4b4" d="M366 304h8v8h-8zM366 312h8v8h-8zM366 320h8v8h-8z"/><path fill="#bdbaba" d="M382 304h8v8h-8zM382 312h8v8h-8zM382 352h8v8h-8zM382 360h8v8h-8z"/><path fill="#c3c3c0" d="M398 304h8v8h-8zM398 312h8v8h-8zM398 320h8v8h-8zM398 328h8v8h-8zM398 336h8v8h-8zM398 344h8v8h-8z"/><path fill="#d2cfcc" d="M438 304h8v8h-8zM438 312h8v8h-8zM438 320h8v8h-8zM438 328h8v8h-8zM438 336h8v8h-8zM438 344h8v8h-8zM438 352h8v8h-8zM446 368h8v8h-8zM766 368h8v8h-8zM446 376h8v8h-8zM766 376h8v8h-8zM766 384h8v8h-8z"/><path fill="#e7e1de" d="M526 304h8v8h-8zM710 312h8v8h-8zM518 328h8v8h-8zM518 336h8v8h-8zM718 336h8v8h-8zM518 344h8v8h-8zM718 344h8v8h-8zM518 352h8v8h-8zM718 352h8v8h-8zM518 360h8v8h-8zM718 360h8v8h-8zM518 368h8v8h-8zM718 368h8v8h-8zM518 376h8v8h-8zM710 376h8v8h-8zM518 384h8v8h-8zM702 392h8v8h-8zM526 400h8v8h-8z"/><path fill="#93999c" d="M310 312h24v8h-24z"/><path fill="#999c9f" d="M334 312h8v8h-8z"/><path fill="#a2a5a5" d="M342 312h8v8h-8z"/><path fill="#a8abab" d="M350 312h8v8h-8z"/><path fill="#bab7b7" d="M374 312h8v8h-8zM374 320h8v8h-8zM374 328h8v8h-8zM374 336h8v8h-8zM374 344h8v8h-8zM374 352h8v8h-8z"/><path fill="#c0c0bd" d="M390 312h8v8h-8zM390 320h8v8h-8zM390 328h8v8h-8zM390 336h8v8h-8zM390 344h8v8h-8zM390 352h8v8h-8z"/><path fill="#c6c6c3" d="M406 312h8v8h-8zM406 320h8v8h-8zM406 328h8v8h-8zM406 336h8v8h-8zM406 344h8v8h-8z"/><path fill="#d5d2cf" d="M446 312h8v8h-8zM446 320h8v8h-8zM446 328h16v8h-16zM446 336h16v8h-16zM758 336h8v8h-8zM454 344h8v8h-8zM454 352h8v8h-8zM454 360h8v8h-8zM454 368h8v8h-8zM758 368h8v8h-8zM758 376h8v8h-8zM758 384h8v8h-8zM758 392h8v8h-8z"/><path fill="#e1dbdb" d="M494 312h8v8h-8zM494 320h8v8h-8z"/><path fill="#f0eae7" d="M606 312h16v8h-16zM582 320h56v8h-56zM566 328h24v8h-24zM614 328h40v8h-40zM558 336h8v8h-8zM630 336h24v8h-24zM550 344h8v8h-8zM630 344h24v8h-24zM542 352h8v8h-8zM638 352h16v8h-16zM638 360h8v8h-8zM638 368h8v8h-8zM630 376h8v8h-8z"/><path fill="#edeae4" d="M654 312h8v8h-8zM654 320h8v8h-8zM558 328h8v8h-8zM654 328h16v8h-16zM550 336h8v8h-8zM654 336h16v8h-16zM662 344h8v8h-8zM662 352h8v8h-8zM662 360h8v8h-8zM654 376h8v8h-8z"/><path fill="#93969c" d="M310 320h16v8h-16zM310 328h8v8h-8z"/><path fill="#939699" d="M326 320h8v8h-8zM318 328h8v8h-8zM302 336h24v8h-24zM310 344h8v8h-8z"/><path fill="#9c9fa2" d="M334 320h8v8h-8z"/><path fill="#a5a5a8" d="M342 320h8v8h-8zM342 328h8v8h-8z"/><path fill="#ababab" d="M350 320h8v8h-8zM350 328h8v8h-8zM350 336h8v8h-8z"/><path fill="#b1b1b1" d="M358 320h8v8h-8zM358 328h8v8h-8zM358 336h8v8h-8z"/><path fill="#bdbdba" d="M382 320h8v8h-8zM382 328h8v8h-8zM382 336h8v8h-8zM382 344h8v8h-8z"/><path fill="#cfccc9" d="M430 320h8v8h-8zM430 328h8v8h-8zM430 336h8v8h-8zM430 344h8v8h-8zM430 352h8v8h-8zM430 360h8v8h-8zM438 384h8v8h-8zM766 392h8v8h-8zM766 400h8v8h-8zM766 408h8v8h-8z"/><path fill="#e7e4de" d="M710 320h8v8h-8zM710 328h8v8h-8zM710 336h8v8h-8zM710 344h8v8h-8zM710 352h8v8h-8zM710 360h8v8h-8zM710 368h8v8h-8z"/><path fill="#969699" d="M326 328h8v8h-8z"/><path fill="#9f9fa2" d="M334 328h8v8h-8zM334 336h8v8h-8z"/><path fill="#b7b4b4" d="M366 328h8v8h-8zM366 336h8v8h-8zM366 344h8v8h-8zM366 352h8v8h-8z"/><path fill="#ded8d5" d="M478 328h8v8h-8zM478 336h8v8h-8zM478 344h8v8h-8zM478 352h8v8h-8zM478 360h8v8h-8zM486 376h8v8h-8zM486 384h8v8h-8zM494 400h8v8h-8zM742 400h8v8h-8z"/><path fill="#e1dbd8" d="M494 328h8v8h-8zM494 352h8v8h-8zM494 360h8v8h-8zM494 368h8v8h-8zM742 368h8v8h-8zM494 376h8v8h-8zM742 376h8v8h-8zM502 392h8v8h-8zM734 392h8v8h-8zM510 408h8v8h-8z"/><path fill="#f0ede7" d="M590 328h24v8h-24zM566 336h8v8h-8zM606 336h24v8h-24zM622 344h8v8h-8zM630 352h8v8h-8zM630 360h8v8h-8zM630 368h8v8h-8z"/><path fill="#e4dedb" d="M726 328h8v8h-8zM502 336h8v8h-8zM502 344h8v8h-8zM502 352h8v8h-8zM502 360h8v8h-8zM502 368h8v8h-8zM726 376h8v8h-8zM510 384h8v8h-8zM726 384h8v8h-8z"/><path fill="#96999c" d="M326 336h8v8h-8z"/><path fill="#a5a8a8" d="M342 336h8v8h-8z"/><path fill="#e1ded8" d="M494 336h8v8h-8zM494 344h8v8h-8zM734 368h8v8h-8zM734 376h8v8h-8zM502 384h8v8h-8zM734 384h8v8h-8z"/><path fill="#eae7e1" d="M534 336h8v8h-8zM686 336h8v8h-8zM534 344h8v8h-8zM686 344h8v8h-8zM686 352h8v8h-8zM686 360h8v8h-8zM686 368h8v8h-8z"/><path fill="#f3edea" d="M574 336h32v8h-32zM558 344h8v8h-8zM606 344h8v8h-8zM614 352h8v8h-8z"/><path fill="#e4e1db" d="M726 336h8v8h-8zM726 344h8v8h-8zM726 352h8v8h-8zM510 360h8v8h-8zM726 360h8v8h-8zM510 368h8v8h-8zM726 368h8v8h-8zM510 376h8v8h-8zM718 392h8v8h-8zM518 400h8v8h-8z"/><path fill="#909399" d="M302 344h8v8h-8z"/><path fill="#909396" d="M318 344h8v8h-8zM302 352h16v8h-16zM302 360h16v8h-16zM302 368h8v8h-8z"/><path fill="#99999c" d="M326 344h8v8h-8zM326 352h8v8h-8z"/><path fill="#9fa2a2" d="M334 344h8v8h-8z"/><path fill="#a8a8a8" d="M342 344h8v8h-8z"/><path fill="#aeabab" d="M350 344h8v8h-8zM350 352h8v8h-8zM350 360h8v8h-8z"/><path fill="#b1b1ae" d="M358 344h8v8h-8zM358 352h8v8h-8zM358 360h8v8h-8zM358 368h8v8h-8z"/><path fill="#ccc9c6" d="M422 344h8v8h-8zM422 352h8v8h-8zM422 360h8v8h-8zM422 368h8v8h-8zM766 424h8v8h-8z"/><path fill="#d5cfcc" d="M446 344h8v8h-8zM446 352h8v8h-8zM446 360h8v8h-8zM454 384h8v8h-8zM454 392h8v8h-8zM758 416h8v8h-8z"/><path fill="#dbd8d2" d="M470 344h8v8h-8zM478 376h8v8h-8zM478 384h8v8h-8zM750 384h8v8h-8zM750 392h8v8h-8zM742 424h8v8h-8z"/><path fill="#f6f0ed" d="M566 344h32v8h-32z"/><path fill="#f3f0ea" d="M598 344h8v8h-8zM550 352h8v8h-8zM614 360h8v8h-8z"/><path fill="#f3ede7" d="M614 344h8v8h-8zM622 352h8v8h-8zM542 360h8v8h-8zM622 360h8v8h-8zM622 368h8v8h-8zM622 376h8v8h-8zM622 384h8v8h-8zM622 392h8v8h-8zM542 400h8v8h-8zM614 400h8v8h-8zM550 408h8v8h-8zM606 408h8v8h-8zM590 416h8v8h-8z"/><path fill="#f0eae4" d="M654 344h8v8h-8zM654 352h8v8h-8zM646 360h16v8h-16zM534 368h8v8h-8zM646 368h16v8h-16zM534 376h8v8h-8zM638 376h16v8h-16zM534 384h8v8h-8zM630 384h24v8h-24zM630 392h16v8h-16zM622 400h16v8h-16zM614 408h16v8h-16zM558 416h8v8h-8zM606 416h8v8h-8z"/><path fill="#d2d2cf" d="M758 344h16v8h-16zM758 352h8v8h-8z"/><path fill="#909393" d="M318 352h8v8h-8zM318 360h8v8h-8zM318 368h8v8h-8z"/><path fill="#a2a2a2" d="M334 352h8v8h-8z"/><path fill="#a8a8a5" d="M342 352h8v8h-8zM342 360h8v8h-8z"/><path fill="#c9c6c3" d="M414 352h8v8h-8zM414 360h8v8h-8zM414 368h8v8h-8zM414 376h8v8h-8z"/><path fill="#dbd5d2" d="M470 352h8v8h-8zM470 360h8v8h-8zM470 368h8v8h-8zM470 376h8v8h-8zM478 392h8v8h-8zM750 400h8v8h-8zM486 408h8v8h-8z"/><path fill="#f9f3f0" d="M558 352h8v8h-8zM550 360h8v8h-8z"/><path fill="#fcf9f3" d="M566 352h8v8h-8zM598 360h8v8h-8z"/><path fill="#fff9f6" d="M574 352h8v8h-8zM550 368h8v8h-8z"/><path fill="#fff9f3" d="M582 352h8v8h-8zM598 400h8v8h-8zM566 408h8v8h-8zM582 408h8v8h-8z"/><path fill="#fcf6f0" d="M590 352h8v8h-8zM606 368h8v8h-8zM606 384h8v8h-8zM606 392h8v8h-8zM590 408h8v8h-8z"/><path fill="#f9f3ed" d="M598 352h8v8h-8zM542 376h8v8h-8zM542 384h8v8h-8zM550 400h8v8h-8zM558 408h8v8h-8z"/><path fill="#f6f0ea" d="M606 352h8v8h-8zM542 368h8v8h-8zM614 368h8v8h-8zM614 376h8v8h-8zM614 384h8v8h-8zM542 392h8v8h-8zM614 392h8v8h-8zM606 400h8v8h-8zM598 408h8v8h-8zM574 416h16v8h-16z"/><path fill="#999999" d="M326 360h8v8h-8zM326 368h8v8h-8zM326 376h8v8h-8zM326 384h8v8h-8z"/><path fill="#a2a29f" d="M334 360h8v8h-8zM334 368h8v8h-8z"/><path fill="#b7b4b1" d="M366 360h8v8h-8zM366 368h8v8h-8zM374 392h8v8h-8zM374 400h8v8h-8z"/><path fill="#bab7b4" d="M374 360h8v8h-8zM374 368h8v8h-8zM374 376h8v8h-8zM374 384h8v8h-8zM382 400h8v8h-8z"/><path fill="#c3c0bd" d="M398 360h8v8h-8zM398 368h8v8h-8zM398 376h8v8h-8zM398 384h8v8h-8z"/><path fill="#c6c3c0" d="M406 360h8v8h-8zM406 368h8v8h-8zM406 376h8v8h-8z"/><path fill="#d2ccc9" d="M438 360h8v8h-8zM438 368h8v8h-8zM438 376h8v8h-8zM446 392h8v8h-8zM446 400h8v8h-8z"/><path fill="#d8d5cf" d="M462 360h8v8h-8zM470 384h8v8h-8zM470 392h8v8h-8z"/><path fill="#dedbd5" d="M486 360h8v8h-8zM486 368h8v8h-8zM742 384h8v8h-8zM494 392h8v8h-8zM742 392h8v8h-8z"/><path fill="#fffcf6" d="M558 360h8v8h-8zM550 392h8v8h-8zM574 408h8v8h-8z"/><path fill="#ffffff" d="M566 360h24v8h-24zM558 368h40v8h-40zM558 376h40v8h-40zM558 384h40v8h-40zM558 392h40v8h-40zM566 400h24v8h-24z"/><path fill="#fffff9" d="M590 360h8v8h-8zM550 376h8v8h-8zM550 384h8v8h-8zM598 392h8v8h-8zM558 400h8v8h-8zM590 400h8v8h-8z"/><path fill="#f6f3ed" d="M606 360h8v8h-8z"/><path fill="#ede7e1" d="M678 360h8v8h-8zM678 368h8v8h-8zM670 376h16v8h-16zM662 384h24v8h-24zM654 392h24v8h-24zM534 400h8v8h-8zM638 400h32v8h-32zM542 408h8v8h-8zM630 408h32v8h-32zM550 416h8v8h-8zM622 416h24v8h-24zM566 424h8v8h-8zM598 424h24v8h-24z"/><path fill="#909093" d="M310 368h8v8h-8zM302 376h8v8h-8zM318 376h8v8h-8zM302 384h8v8h-8z"/><path fill="#a8a5a5" d="M342 368h8v8h-8zM342 376h8v8h-8z"/><path fill="#aeaba8" d="M350 368h8v8h-8zM358 400h8v8h-8zM358 408h8v8h-8z"/><path fill="#bdbab7" d="M382 368h8v8h-8zM382 376h8v8h-8zM382 384h8v8h-8z"/><path fill="#c0bdba" d="M390 368h8v8h-8zM390 376h8v8h-8zM390 384h8v8h-8z"/><path fill="#cfccc6" d="M430 368h8v8h-8zM438 392h8v8h-8z"/><path fill="#d8d2cf" d="M462 368h8v8h-8zM462 376h8v8h-8zM462 384h8v8h-8zM470 400h8v8h-8zM750 424h8v8h-8z"/><path fill="#fffcf9" d="M598 368h8v8h-8z"/><path fill="#eae4de" d="M702 368h8v8h-8zM694 376h16v8h-16zM686 384h24v8h-24zM526 392h8v8h-8zM678 392h24v8h-24zM670 400h32v8h-32zM534 408h8v8h-8zM662 408h32v8h-32zM542 416h8v8h-8zM654 416h24v8h-24zM550 424h8v8h-8zM638 424h24v8h-24zM566 432h24v8h-24zM598 432h40v8h-40z"/><path fill="#909090" d="M310 376h8v8h-8zM318 384h8v8h-8zM318 392h8v8h-8z"/><path fill="#a29f9f" d="M334 376h8v8h-8z"/><path fill="#ababa8" d="M350 376h8v8h-8zM350 384h8v8h-8z"/><path fill="#b1aeae" d="M358 376h8v8h-8z"/><path fill="#b4b4b1" d="M366 376h8v8h-8z"/><path fill="#ccc9c3" d="M422 376h8v8h-8zM430 392h8v8h-8zM430 400h8v8h-8zM438 416h8v8h-8zM766 432h8v8h-8z"/><path fill="#cfc9c6" d="M430 376h8v8h-8zM430 384h8v8h-8zM438 400h8v8h-8zM446 416h8v8h-8zM766 416h8v8h-8zM758 440h8v8h-8z"/><path fill="#d5d2cc" d="M454 376h8v8h-8zM462 400h8v8h-8zM758 400h8v8h-8zM758 408h8v8h-8zM470 416h8v8h-8z"/><path fill="#e4ded8" d="M502 376h8v8h-8zM510 392h8v8h-8zM726 392h8v8h-8zM510 400h8v8h-8zM718 400h16v8h-16zM518 408h8v8h-8zM718 408h16v8h-16zM518 416h16v8h-16zM710 416h16v8h-16zM526 424h8v8h-8zM702 424h16v8h-16zM534 432h8v8h-8zM694 432h16v8h-16zM550 440h8v8h-8zM686 440h8v8h-8zM566 448h8v8h-8zM670 448h8v8h-8zM590 456h8v8h-8zM646 456h8v8h-8z"/><path fill="#fffffc" d="M598 376h8v8h-8zM598 384h8v8h-8z"/><path fill="#fcf6f3" d="M606 376h8v8h-8z"/><path fill="#e7e1db" d="M718 376h8v8h-8zM710 384h16v8h-16zM518 392h8v8h-8zM710 392h8v8h-8zM702 400h16v8h-16zM526 408h8v8h-8zM694 408h24v8h-24zM534 416h8v8h-8zM686 416h16v8h-16zM542 424h8v8h-8zM678 424h16v8h-16zM550 432h8v8h-8zM662 432h16v8h-16zM566 440h16v8h-16zM646 440h16v8h-16z"/><path fill="#8d9090" d="M310 384h8v8h-8zM302 392h8v8h-8zM302 400h8v8h-8z"/><path fill="#9f9f9f" d="M334 384h8v8h-8z"/><path fill="#a8a5a2" d="M342 384h8v8h-8zM350 416h8v8h-8z"/><path fill="#b1aeab" d="M358 384h8v8h-8zM358 392h8v8h-8zM366 416h8v8h-8z"/><path fill="#b4b1ae" d="M366 384h8v8h-8zM366 392h8v8h-8zM366 400h8v8h-8z"/><path fill="#c6c3bd" d="M406 384h8v8h-8zM414 400h8v8h-8zM414 408h8v8h-8zM422 424h8v8h-8zM758 472h16v8h-16z"/><path fill="#c9c6c0" d="M414 384h8v8h-8zM422 400h8v8h-8zM430 424h8v8h-8zM766 448h8v8h-8zM758 456h16v8h-16z"/><path fill="#ccc6c3" d="M422 384h8v8h-8zM422 392h8v8h-8zM430 408h8v8h-8zM766 440h8v8h-8zM758 448h8v8h-8z"/><path fill="#d2cfc9" d="M446 384h8v8h-8zM454 408h8v8h-8zM462 424h8v8h-8zM758 424h8v8h-8z"/><path fill="#e1dbd5" d="M494 384h8v8h-8zM502 400h8v8h-8zM734 400h8v8h-8zM502 408h8v8h-8zM734 408h8v8h-8zM510 416h8v8h-8zM726 416h16v8h-16zM510 424h16v8h-16zM726 424h8v8h-8zM518 432h16v8h-16zM718 432h8v8h-8zM534 440h8v8h-8zM710 440h8v8h-8zM542 448h8v8h-8zM702 448h8v8h-8zM686 456h8v8h-8zM574 464h8v8h-8z"/><path fill="#8d8d90" d="M310 392h8v8h-8zM302 408h8v8h-8z"/><path fill="#999996" d="M326 392h8v8h-8z"/><path fill="#9f9f9c" d="M334 392h8v8h-8zM334 400h8v8h-8z"/><path fill="#a5a5a2" d="M342 392h8v8h-8z"/><path fill="#aba8a5" d="M350 392h8v8h-8zM350 400h8v8h-8zM358 424h8v8h-8z"/><path fill="#bdb7b4" d="M382 392h8v8h-8z"/><path fill="#c0bdb7" d="M390 392h8v8h-8zM398 408h8v8h-8zM406 432h8v8h-8z"/><path fill="#c3bdba" d="M398 392h8v8h-8zM398 400h8v8h-8zM406 416h8v8h-8z"/><path fill="#c6c0bd" d="M406 392h8v8h-8zM406 400h8v8h-8zM414 416h8v8h-8z"/><path fill="#c9c3c0" d="M414 392h8v8h-8zM422 408h8v8h-8zM766 464h8v8h-8z"/><path fill="#d8d2cc" d="M462 392h8v8h-8zM470 408h8v8h-8zM478 416h8v8h-8zM478 424h8v8h-8zM486 432h8v8h-8zM750 432h8v8h-8zM494 440h8v8h-8zM494 448h8v8h-8zM742 448h8v8h-8zM734 456h8v8h-8z"/><path fill="#ded8d2" d="M486 392h8v8h-8zM486 400h8v8h-8zM494 408h8v8h-8zM742 408h8v8h-8zM494 416h16v8h-16zM742 416h8v8h-8zM502 424h8v8h-8zM734 424h8v8h-8zM510 432h8v8h-8zM734 432h8v8h-8zM518 440h8v8h-8zM726 440h8v8h-8zM526 448h8v8h-8zM718 448h8v8h-8zM534 456h8v8h-8zM710 456h8v8h-8zM550 464h8v8h-8z"/><path fill="#8d8d8d" d="M310 400h8v8h-8zM310 408h16v8h-16zM302 416h8v8h-8zM302 424h8v8h-8z"/><path fill="#90908d" d="M318 400h8v8h-8z"/><path fill="#999696" d="M326 400h8v8h-8z"/><path fill="#a5a29f" d="M342 400h8v8h-8zM342 408h8v8h-8zM350 432h8v8h-8z"/><path fill="#c0bab7" d="M390 400h8v8h-8zM398 416h8v8h-8z"/><path fill="#d5cfc9" d="M454 400h8v8h-8zM462 408h8v8h-8zM462 416h8v8h-8zM470 424h8v8h-8zM470 432h16v8h-16zM478 440h8v8h-8zM750 440h8v8h-8zM486 448h8v8h-8zM750 448h8v8h-8zM494 456h8v8h-8zM742 456h8v8h-8zM734 472h8v8h-8zM726 480h8v8h-8z"/><path fill="#dbd5cf" d="M478 400h8v8h-8zM478 408h8v8h-8zM750 408h8v8h-8zM486 416h8v8h-8zM750 416h8v8h-8zM486 424h16v8h-16zM494 432h16v8h-16zM742 432h8v8h-8zM502 440h8v8h-8zM734 440h8v8h-8zM510 448h8v8h-8zM734 448h8v8h-8zM518 456h8v8h-8zM726 456h8v8h-8zM718 464h8v8h-8z"/><path fill="#969693" d="M326 408h8v8h-8z"/><path fill="#9f9c99" d="M334 408h8v8h-8zM342 432h8v8h-8z"/><path fill="#aba8a2" d="M350 408h8v8h-8zM358 432h8v8h-8zM366 448h8v8h-8z"/><path fill="#b4aeab" d="M366 408h8v8h-8zM374 432h8v8h-8z"/><path fill="#b7b4ae" d="M374 408h8v8h-8zM382 424h8v8h-8zM382 432h8v8h-8zM390 448h8v8h-8z"/><path fill="#bab7b1" d="M382 408h8v8h-8zM390 432h8v8h-8zM398 448h8v8h-8z"/><path fill="#bdbab4" d="M390 408h8v8h-8zM390 416h8v8h-8zM398 432h8v8h-8zM406 448h8v8h-8z"/><path fill="#c3c0ba" d="M406 408h8v8h-8zM414 432h8v8h-8z"/><path fill="#cfc9c3" d="M438 408h8v8h-8zM446 424h8v8h-8zM446 432h16v8h-16zM454 440h8v8h-8zM462 448h8v8h-8zM470 456h8v8h-8zM750 464h8v8h-8zM742 480h8v8h-8z"/><path fill="#d2ccc6" d="M446 408h8v8h-8zM454 416h8v8h-8zM454 424h8v8h-8zM462 432h8v8h-8zM758 432h8v8h-8zM462 440h16v8h-16zM470 448h8v8h-8zM478 456h8v8h-8zM750 456h8v8h-8zM486 464h8v8h-8zM494 472h8v8h-8zM742 472h8v8h-8zM734 480h8v8h-8z"/><path fill="#8d8d8a" d="M310 416h16v8h-16zM302 432h8v8h-8z"/><path fill="#969390" d="M326 416h8v8h-8z"/><path fill="#9c9c99" d="M334 416h8v8h-8z"/><path fill="#a2a29c" d="M342 416h8v8h-8z"/><path fill="#aeaba5" d="M358 416h8v8h-8zM366 432h8v8h-8zM366 440h8v8h-8zM374 456h8v8h-8z"/><path fill="#b7b1ae" d="M374 416h8v8h-8z"/><path fill="#bab4b1" d="M382 416h8v8h-8z"/><path fill="#c9c3bd" d="M422 416h8v8h-8zM430 432h8v8h-8zM430 440h16v8h-16zM438 448h8v8h-8zM446 456h8v8h-8zM758 464h8v8h-8z"/><path fill="#ccc6c0" d="M430 416h8v8h-8zM438 424h8v8h-8zM438 432h8v8h-8zM446 440h8v8h-8zM446 448h16v8h-16zM454 456h8v8h-8zM462 464h8v8h-8zM470 472h8v8h-8zM750 472h8v8h-8zM734 496h8v8h-8z"/><path fill="#f6ede7" d="M566 416h8v8h-8z"/><path fill="#f3eae4" d="M598 416h8v8h-8z"/><path fill="#f0e7e1" d="M614 416h8v8h-8zM590 424h8v8h-8z"/><path fill="#ede4de" d="M646 416h8v8h-8zM630 424h8v8h-8zM590 432h8v8h-8z"/><path fill="#eae4db" d="M678 416h8v8h-8zM662 424h8v8h-8zM638 432h16v8h-16zM598 440h24v8h-24z"/><path fill="#e7e1d8" d="M702 416h8v8h-8zM694 424h8v8h-8zM678 432h8v8h-8zM558 440h8v8h-8zM662 440h16v8h-16zM582 448h72v8h-72z"/><path fill="#8d8a8a" d="M310 424h16v8h-16z"/><path fill="#939390" d="M326 424h8v8h-8z"/><path fill="#9c9996" d="M334 424h8v8h-8z"/><path fill="#a29f9c" d="M342 424h8v8h-8z"/><path fill="#a8a59f" d="M350 424h8v8h-8zM358 440h8v8h-8zM358 448h8v8h-8zM366 464h8v8h-8z"/><path fill="#b1aea8" d="M366 424h8v8h-8zM374 440h8v8h-8z"/><path fill="#b4b1ab" d="M374 424h8v8h-8zM382 448h8v8h-8z"/><path fill="#bdb7b1" d="M390 424h8v8h-8zM398 440h8v8h-8zM406 456h8v8h-8zM414 464h8v8h-8zM422 480h8v8h-8zM430 488h8v8h-8zM734 528h16v8h-16z"/><path fill="#c0bab4" d="M398 424h8v8h-8zM406 440h8v8h-8zM414 456h8v8h-8zM422 464h8v8h-8zM438 488h8v8h-8zM742 512h8v8h-8z"/><path fill="#c3bdb7" d="M406 424h8v8h-8zM414 440h8v8h-8zM422 448h8v8h-8zM422 456h8v8h-8zM430 464h8v8h-8zM438 472h8v8h-8zM750 496h8v8h-8zM742 504h16v8h-16zM734 512h8v8h-8z"/><path fill="#c6c0ba" d="M414 424h8v8h-8zM422 432h8v8h-8zM422 440h8v8h-8zM430 448h8v8h-8zM430 456h8v8h-8zM438 464h8v8h-8zM446 472h8v8h-8zM750 480h16v8h-16zM750 488h16v8h-16zM742 496h8v8h-8z"/><path fill="#e7ded8" d="M534 424h8v8h-8zM542 432h8v8h-8zM686 432h8v8h-8zM678 440h8v8h-8zM574 448h8v8h-8zM654 448h16v8h-16zM598 456h48v8h-48z"/><path fill="#ede7de" d="M558 424h8v8h-8zM622 424h8v8h-8z"/><path fill="#f0eae1" d="M574 424h16v8h-16z"/><path fill="#eae1db" d="M670 424h8v8h-8zM558 432h8v8h-8zM654 432h8v8h-8zM582 440h16v8h-16zM622 440h24v8h-24z"/><path fill="#e4dbd5" d="M718 424h8v8h-8zM702 440h8v8h-8zM550 448h8v8h-8zM694 448h8v8h-8zM558 456h8v8h-8zM678 456h8v8h-8zM582 464h16v8h-16zM654 464h16v8h-16z"/><path fill="#8a8a8a" d="M310 432h8v8h-8zM302 440h8v8h-8zM302 448h8v8h-8z"/><path fill="#8a8a87" d="M318 432h8v8h-8zM310 440h16v8h-16zM310 448h16v8h-16zM302 456h16v8h-16zM302 464h16v8h-16zM302 472h8v8h-8z"/><path fill="#93908d" d="M326 432h8v8h-8z"/><path fill="#999693" d="M334 432h8v8h-8z"/><path fill="#e4ded5" d="M710 432h8v8h-8zM542 440h8v8h-8zM694 440h8v8h-8zM558 448h8v8h-8zM678 448h16v8h-16zM566 456h24v8h-24zM654 456h24v8h-24zM598 464h56v8h-56z"/><path fill="#e1dbd2" d="M726 432h8v8h-8zM526 440h8v8h-8zM718 440h8v8h-8zM534 448h8v8h-8zM710 448h8v8h-8zM550 456h8v8h-8zM694 456h16v8h-16zM558 464h16v8h-16zM670 464h24v8h-24zM582 472h40v8h-40zM638 472h40v8h-40z"/><path fill="#908d8a" d="M326 440h8v8h-8z"/><path fill="#999690" d="M334 440h8v8h-8zM342 456h8v8h-8z"/><path fill="#9f9c96" d="M342 440h8v8h-8zM350 456h8v8h-8z"/><path fill="#a5a29c" d="M350 440h8v8h-8zM358 456h8v8h-8zM366 472h8v8h-8z"/><path fill="#b7b1ab" d="M382 440h8v8h-8zM390 456h8v8h-8zM398 472h8v8h-8zM406 480h8v8h-8z"/><path fill="#bab4ae" d="M390 440h8v8h-8zM398 456h8v8h-8zM406 472h8v8h-8zM414 480h8v8h-8zM726 536h8v8h-8z"/><path fill="#d8d2c9" d="M486 440h8v8h-8zM502 456h8v8h-8zM510 464h8v8h-8zM734 464h8v8h-8zM518 472h8v8h-8zM726 472h8v8h-8zM526 480h16v8h-16zM718 480h8v8h-8zM542 488h8v8h-8zM710 488h8v8h-8zM558 496h8v8h-8zM694 496h16v8h-16zM574 504h16v8h-16zM678 504h8v8h-8zM614 512h40v8h-40z"/><path fill="#ded8cf" d="M510 440h8v8h-8zM518 448h8v8h-8zM726 448h8v8h-8zM718 456h8v8h-8zM542 464h8v8h-8zM702 464h16v8h-16zM558 472h8v8h-8zM694 472h8v8h-8zM574 480h16v8h-16zM670 480h24v8h-24zM598 488h72v8h-72z"/><path fill="#dbd5cc" d="M742 440h8v8h-8zM526 464h8v8h-8zM726 464h8v8h-8zM534 472h16v8h-16zM710 472h16v8h-16zM550 480h8v8h-8zM702 480h8v8h-8zM566 488h8v8h-8zM686 488h16v8h-16zM582 496h24v8h-24zM662 496h24v8h-24z"/><path fill="#8d8a87" d="M326 448h8v8h-8z"/><path fill="#96938d" d="M334 448h8v8h-8zM342 464h8v8h-8z"/><path fill="#9c9993" d="M342 448h8v8h-8z"/><path fill="#a29f99" d="M350 448h8v8h-8zM358 464h8v8h-8z"/><path fill="#b1aba5" d="M374 448h8v8h-8zM382 464h8v8h-8zM390 480h8v8h-8zM398 488h8v8h-8z"/><path fill="#c0bdb4" d="M414 448h8v8h-8zM750 512h8v8h-8z"/><path fill="#d5cfc6" d="M478 448h8v8h-8zM486 456h8v8h-8zM494 464h8v8h-8zM742 464h8v8h-8zM502 472h8v8h-8zM510 480h16v8h-16zM526 488h8v8h-8zM718 488h8v8h-8zM534 496h8v8h-8zM710 496h8v8h-8zM550 504h8v8h-8zM702 504h8v8h-8zM566 512h8v8h-8zM686 512h8v8h-8z"/><path fill="#dbd2cc" d="M502 448h8v8h-8zM510 456h8v8h-8zM518 464h8v8h-8zM526 472h8v8h-8zM542 480h8v8h-8zM710 480h8v8h-8zM558 488h8v8h-8z"/><path fill="#8a8784" d="M318 456h16v8h-16zM318 464h16v8h-16zM318 472h8v8h-8zM302 480h24v8h-24zM310 488h16v8h-16zM310 496h16v8h-16z"/><path fill="#93908a" d="M334 456h8v8h-8z"/><path fill="#aba59f" d="M366 456h8v8h-8zM374 472h8v8h-8zM390 496h8v8h-8z"/><path fill="#b4aea8" d="M382 456h8v8h-8zM390 464h8v8h-8zM398 480h8v8h-8z"/><path fill="#c6c3ba" d="M438 456h8v8h-8z"/><path fill="#cfc9c0" d="M462 456h8v8h-8zM470 464h8v8h-8zM478 472h8v8h-8zM486 480h8v8h-8zM494 488h8v8h-8zM502 496h8v8h-8zM510 504h8v8h-8zM726 504h8v8h-8zM526 512h8v8h-8zM702 520h8v8h-8z"/><path fill="#ded5cf" d="M526 456h8v8h-8zM534 464h8v8h-8zM550 472h8v8h-8zM702 472h8v8h-8zM566 480h8v8h-8zM590 488h8v8h-8z"/><path fill="#e1d8d2" d="M542 456h8v8h-8zM694 464h8v8h-8zM574 472h8v8h-8zM678 472h8v8h-8zM606 480h48v8h-48z"/><path fill="#908d87" d="M334 464h8v8h-8zM342 480h8v8h-8z"/><path fill="#9f9993" d="M350 464h8v8h-8zM358 480h8v8h-8z"/><path fill="#aea8a2" d="M374 464h8v8h-8zM390 488h8v8h-8z"/><path fill="#b7b4ab" d="M398 464h8v8h-8z"/><path fill="#bab7ae" d="M406 464h8v8h-8z"/><path fill="#c9c3ba" d="M446 464h8v8h-8zM454 472h8v8h-8zM462 480h8v8h-8zM470 488h8v8h-8zM478 496h8v8h-8zM486 504h8v8h-8zM734 504h8v8h-8zM494 512h8v8h-8z"/><path fill="#ccc3bd" d="M454 464h8v8h-8z"/><path fill="#d2c9c3" d="M478 464h8v8h-8zM494 480h8v8h-8zM502 488h8v8h-8zM734 488h8v8h-8zM718 504h8v8h-8z"/><path fill="#d8cfc9" d="M502 464h8v8h-8zM510 472h8v8h-8zM534 488h8v8h-8zM550 496h8v8h-8z"/><path fill="#8a8787" d="M310 472h8v8h-8z"/><path fill="#8a8781" d="M326 472h8v8h-8zM326 480h16v8h-16zM326 488h16v8h-16zM326 496h8v8h-8zM318 504h16v8h-16zM318 512h16v8h-16zM318 520h8v8h-8z"/><path fill="#8d8a84" d="M334 472h8v8h-8zM342 488h8v8h-8z"/><path fill="#96908a" d="M342 472h8v8h-8zM350 488h8v8h-8z"/><path fill="#9c9690" d="M350 472h8v8h-8zM358 488h8v8h-8z"/><path fill="#a29c96" d="M358 472h8v8h-8zM366 488h8v8h-8z"/><path fill="#aeaba2" d="M382 472h8v8h-8z"/><path fill="#b4aea5" d="M390 472h8v8h-8zM406 496h8v8h-8zM414 504h8v8h-8zM422 512h8v8h-8zM694 568h24v8h-24z"/><path fill="#bdb7ae" d="M414 472h8v8h-8zM430 496h8v8h-8zM438 504h8v8h-8zM446 512h8v8h-8zM454 520h8v8h-8zM734 536h8v8h-8z"/><path fill="#c0bab1" d="M422 472h8v8h-8zM430 480h8v8h-8zM446 504h8v8h-8zM454 512h8v8h-8zM734 520h16v8h-16zM726 528h8v8h-8zM718 536h8v8h-8zM710 544h8v8h-8z"/><path fill="#c3bdb4" d="M430 472h8v8h-8zM438 480h8v8h-8zM446 488h8v8h-8zM454 496h8v8h-8zM462 504h8v8h-8zM470 512h8v8h-8zM478 520h8v8h-8z"/><path fill="#ccc6bd" d="M462 472h8v8h-8zM470 480h8v8h-8zM478 488h8v8h-8zM742 488h8v8h-8zM486 496h8v8h-8zM494 504h8v8h-8zM510 512h8v8h-8zM702 528h8v8h-8z"/><path fill="#d2ccc3" d="M486 472h8v8h-8zM502 480h8v8h-8zM510 488h8v8h-8zM518 496h8v8h-8zM726 496h8v8h-8zM526 504h16v8h-16zM542 512h8v8h-8zM702 512h8v8h-8z"/><path fill="#e1d8cf" d="M566 472h8v8h-8zM686 472h8v8h-8zM590 480h16v8h-16zM654 480h16v8h-16z"/><path fill="#e4dbd2" d="M622 472h16v8h-16z"/><path fill="#99938d" d="M350 480h8v8h-8zM358 496h8v8h-8z"/><path fill="#a59f99" d="M366 480h8v8h-8z"/><path fill="#a8a59c" d="M374 480h8v8h-8zM390 504h8v8h-8z"/><path fill="#aea89f" d="M382 480h8v8h-8zM398 504h8v8h-8zM406 512h8v8h-8zM414 520h8v8h-8zM686 584h8v8h-8z"/><path fill="#c6c0b7" d="M446 480h8v8h-8zM454 488h8v8h-8zM462 496h8v8h-8zM470 504h8v8h-8zM478 512h8v8h-8zM726 520h8v8h-8zM502 528h8v8h-8zM718 528h8v8h-8zM710 536h8v8h-8z"/><path fill="#c9c0ba" d="M454 480h8v8h-8zM462 488h8v8h-8zM470 496h8v8h-8z"/><path fill="#cfc6c0" d="M478 480h8v8h-8zM486 488h8v8h-8zM718 512h8v8h-8z"/><path fill="#ded5cc" d="M558 480h8v8h-8zM694 480h8v8h-8zM574 488h16v8h-16zM670 488h16v8h-16zM606 496h56v8h-56z"/><path fill="#a5a299" d="M374 488h8v8h-8z"/><path fill="#aba59c" d="M382 488h8v8h-8zM398 512h8v8h-8zM406 520h8v8h-8zM414 528h8v8h-8zM678 592h8v8h-8z"/><path fill="#b7b1a8" d="M406 488h8v8h-8zM414 496h8v8h-8zM422 504h8v8h-8zM430 512h8v8h-8zM438 520h8v8h-8zM710 552h16v8h-16zM702 560h8v8h-8zM718 560h8v8h-8z"/><path fill="#bab4ab" d="M414 488h8v8h-8zM422 496h8v8h-8zM430 504h8v8h-8zM438 512h8v8h-8zM446 520h8v8h-8zM454 528h8v8h-8zM718 544h16v8h-16zM726 552h8v8h-8z"/><path fill="#bdb4ae" d="M422 488h8v8h-8z"/><path fill="#d5ccc6" d="M518 488h8v8h-8zM726 488h8v8h-8zM718 496h8v8h-8z"/><path fill="#dbd2c9" d="M550 488h8v8h-8zM702 488h8v8h-8zM566 496h16v8h-16zM686 496h8v8h-8zM590 504h88v8h-88z"/><path fill="#8a847e" d="M334 496h8v8h-8zM342 504h8v8h-8zM326 528h16v8h-16zM334 536h8v8h-8z"/><path fill="#8a877e" d="M342 496h8v8h-8z"/><path fill="#938d87" d="M350 496h8v8h-8z"/><path fill="#9f9990" d="M366 496h8v8h-8zM382 520h8v8h-8zM390 528h8v8h-8z"/><path fill="#a29f96" d="M374 496h8v8h-8z"/><path fill="#a8a299" d="M382 496h8v8h-8zM390 512h8v8h-8zM398 520h8v8h-8zM406 528h8v8h-8zM414 536h8v8h-8zM422 544h8v8h-8z"/><path fill="#b1aba2" d="M398 496h8v8h-8zM406 504h8v8h-8zM414 512h8v8h-8zM686 576h24v8h-24z"/><path fill="#c0b7b1" d="M438 496h8v8h-8z"/><path fill="#c3bab4" d="M446 496h8v8h-8z"/><path fill="#cfc6bd" d="M494 496h8v8h-8zM502 504h8v8h-8zM518 512h8v8h-8zM526 520h8v8h-8zM710 520h8v8h-8zM542 528h16v8h-16zM558 536h16v8h-16zM678 536h16v8h-16zM590 544h24v8h-24zM646 544h24v8h-24z"/><path fill="#d2c9c0" d="M510 496h8v8h-8zM518 504h8v8h-8zM534 512h8v8h-8zM710 512h8v8h-8zM542 520h16v8h-16zM694 520h8v8h-8zM558 528h24v8h-24zM678 528h16v8h-16zM590 536h80v8h-80z"/><path fill="#d5ccc3" d="M526 496h8v8h-8zM542 504h8v8h-8zM710 504h8v8h-8zM550 512h16v8h-16zM694 512h8v8h-8zM566 520h24v8h-24zM678 520h16v8h-16zM598 528h72v8h-72z"/><path fill="#d8cfc6" d="M542 496h8v8h-8zM558 504h16v8h-16zM694 504h8v8h-8zM574 512h32v8h-32zM662 512h24v8h-24zM606 520h56v8h-56z"/><path fill="#c3c0b7" d="M758 496h8v8h-8z"/><path fill="#87847e" d="M334 504h8v8h-8zM334 512h16v8h-16zM334 520h8v8h-8zM342 536h8v8h-8zM334 544h16v8h-16z"/><path fill="#8d8a81" d="M350 504h8v8h-8z"/><path fill="#969087" d="M358 504h8v8h-8zM374 528h8v8h-8zM382 536h8v8h-8z"/><path fill="#9c968d" d="M366 504h8v8h-8z"/><path fill="#9f9c93" d="M374 504h8v8h-8z"/><path fill="#a59f96" d="M382 504h8v8h-8z"/><path fill="#c3bab1" d="M454 504h8v8h-8zM462 512h8v8h-8zM470 520h8v8h-8zM478 528h8v8h-8zM494 536h8v8h-8zM502 544h8v8h-8zM518 552h8v8h-8zM662 568h8v8h-8z"/><path fill="#c9c0b7" d="M478 504h8v8h-8zM486 512h8v8h-8zM494 520h8v8h-8zM510 528h8v8h-8zM518 536h8v8h-8zM534 544h16v8h-16zM694 544h8v8h-8zM558 552h8v8h-8zM678 552h8v8h-8zM590 560h16v8h-16zM638 560h16v8h-16z"/><path fill="#d8d2c6" d="M686 504h8v8h-8zM606 512h8v8h-8zM654 512h8v8h-8z"/><path fill="#8a847b" d="M350 512h8v8h-8zM374 544h8v8h-8zM350 560h16v8h-16zM358 568h16v8h-16zM366 576h8v8h-8z"/><path fill="#908d84" d="M358 512h8v8h-8z"/><path fill="#96938a" d="M366 512h8v8h-8z"/><path fill="#9c9990" d="M374 512h8v8h-8z"/><path fill="#a29c93" d="M382 512h8v8h-8zM390 520h8v8h-8z"/><path fill="#ccc3ba" d="M502 512h8v8h-8zM726 512h8v8h-8zM510 520h8v8h-8zM718 520h8v8h-8zM518 528h16v8h-16zM710 528h8v8h-8zM534 536h16v8h-16zM694 536h8v8h-8zM558 544h16v8h-16zM678 544h8v8h-8zM590 552h16v8h-16zM646 552h16v8h-16z"/><path fill="#8a8481" d="M326 520h8v8h-8z"/><path fill="#87847b" d="M342 520h16v8h-16zM342 528h24v8h-24zM350 536h16v8h-16zM350 544h8v8h-8zM342 552h24v8h-24z"/><path fill="#8d877e" d="M358 520h8v8h-8z"/><path fill="#938d84" d="M366 520h8v8h-8z"/><path fill="#99938a" d="M374 520h8v8h-8z"/><path fill="#b4aba2" d="M422 520h8v8h-8zM430 528h8v8h-8zM438 536h8v8h-8zM446 544h8v8h-8zM470 560h8v8h-8z"/><path fill="#b7aea5" d="M430 520h8v8h-8zM438 528h8v8h-8zM446 536h8v8h-8zM710 560h8v8h-8zM494 568h8v8h-8z"/><path fill="#c0baae" d="M462 520h8v8h-8zM486 536h8v8h-8zM494 544h8v8h-8zM702 552h8v8h-8zM542 568h8v8h-8z"/><path fill="#c6c0b4" d="M486 520h8v8h-8zM510 536h8v8h-8zM526 544h8v8h-8zM542 552h8v8h-8zM686 552h8v8h-8zM566 560h8v8h-8zM614 568h16v8h-16z"/><path fill="#c9c3b7" d="M502 520h8v8h-8zM526 536h8v8h-8zM702 536h8v8h-8zM686 544h8v8h-8zM566 552h8v8h-8zM670 552h8v8h-8zM606 560h32v8h-32z"/><path fill="#ccc6ba" d="M518 520h8v8h-8zM534 528h8v8h-8zM550 536h8v8h-8zM670 544h8v8h-8zM606 552h40v8h-40z"/><path fill="#cfc9bd" d="M534 520h8v8h-8zM694 528h8v8h-8zM574 536h8v8h-8zM670 536h8v8h-8zM614 544h32v8h-32z"/><path fill="#d2ccc0" d="M558 520h8v8h-8zM582 528h8v8h-8zM670 528h8v8h-8z"/><path fill="#d5cfc3" d="M590 520h16v8h-16zM662 520h16v8h-16z"/><path fill="#8d8a7e" d="M366 528h8v8h-8z"/><path fill="#9c968a" d="M382 528h8v8h-8zM390 536h8v8h-8zM398 544h8v8h-8zM406 552h8v8h-8zM414 560h8v8h-8zM422 568h8v8h-8zM622 624h8v8h-8z"/><path fill="#a59f93" d="M398 528h8v8h-8zM406 536h8v8h-8zM414 544h8v8h-8zM422 552h8v8h-8zM430 560h8v8h-8zM654 608h8v8h-8z"/><path fill="#b1a89f" d="M422 528h8v8h-8zM430 536h8v8h-8zM438 544h8v8h-8zM694 584h8v8h-8z"/><path fill="#bab1a8" d="M446 528h8v8h-8zM454 536h8v8h-8zM478 552h8v8h-8z"/><path fill="#bdb7ab" d="M462 528h8v8h-8zM470 536h8v8h-8zM494 552h8v8h-8zM694 560h8v8h-8z"/><path fill="#c0b7ae" d="M470 528h8v8h-8zM478 536h8v8h-8zM502 552h8v8h-8zM518 560h8v8h-8z"/><path fill="#c3bdb1" d="M486 528h8v8h-8zM510 544h8v8h-8zM694 552h8v8h-8zM542 560h8v8h-8zM678 560h8v8h-8zM566 568h8v8h-8z"/><path fill="#c6bdb4" d="M494 528h8v8h-8zM502 536h8v8h-8zM518 544h8v8h-8zM702 544h8v8h-8zM534 552h8v8h-8zM558 560h8v8h-8zM670 560h8v8h-8zM606 568h8v8h-8zM630 568h8v8h-8z"/><path fill="#d5ccc0" d="M590 528h8v8h-8z"/><path fill="#8a8478" d="M366 536h8v8h-8zM374 576h8v8h-8zM374 584h16v8h-16zM382 592h24v8h-24zM390 600h24v8h-24zM398 608h32v8h-32zM414 616h24v8h-24zM430 624h8v8h-8z"/><path fill="#908a81" d="M374 536h8v8h-8z"/><path fill="#a29990" d="M398 536h8v8h-8z"/><path fill="#aea59c" d="M422 536h8v8h-8zM430 544h8v8h-8z"/><path fill="#bab4a8" d="M462 536h8v8h-8zM470 544h8v8h-8zM494 560h8v8h-8zM526 576h8v8h-8zM654 584h8v8h-8z"/><path fill="#d2c9bd" d="M582 536h8v8h-8z"/><path fill="#878478" d="M358 544h16v8h-16zM374 552h8v8h-8zM366 560h8v8h-8z"/><path fill="#938a81" d="M382 544h8v8h-8z"/><path fill="#999087" d="M390 544h8v8h-8zM398 552h8v8h-8zM406 560h8v8h-8z"/><path fill="#a29c90" d="M406 544h8v8h-8zM414 552h8v8h-8zM646 616h8v8h-8z"/><path fill="#b7aea2" d="M454 544h8v8h-8zM478 560h8v8h-8zM486 568h8v8h-8zM502 576h8v8h-8zM518 584h16v8h-16zM542 592h16v8h-16zM646 592h8v8h-8zM598 600h8v8h-8z"/><path fill="#b7b1a5" d="M462 544h8v8h-8zM470 552h8v8h-8z"/><path fill="#bdb4ab" d="M478 544h8v8h-8zM686 568h8v8h-8z"/><path fill="#c0b7ab" d="M486 544h8v8h-8zM510 560h8v8h-8zM526 568h16v8h-16zM678 568h8v8h-8zM550 576h24v8h-24zM654 576h16v8h-16zM582 584h56v8h-56z"/><path fill="#ccc3b7" d="M550 544h8v8h-8zM574 552h16v8h-16zM662 552h8v8h-8z"/><path fill="#cfc6ba" d="M574 544h16v8h-16z"/><path fill="#878178" d="M366 552h8v8h-8zM374 560h8v8h-8zM374 568h8v8h-8z"/><path fill="#8d877b" d="M382 552h8v8h-8zM390 560h8v8h-8z"/><path fill="#938d81" d="M390 552h8v8h-8zM398 560h8v8h-8z"/><path fill="#a8a296" d="M430 552h8v8h-8zM438 560h8v8h-8zM662 600h8v8h-8z"/><path fill="#aea599" d="M438 552h8v8h-8zM462 568h8v8h-8zM470 576h8v8h-8zM486 584h8v8h-8zM502 592h8v8h-8zM526 600h8v8h-8zM558 608h8v8h-8zM622 608h8v8h-8z"/><path fill="#b1a89c" d="M446 552h8v8h-8zM470 568h8v8h-8zM478 576h8v8h-8zM494 584h8v8h-8zM518 592h8v8h-8zM662 592h8v8h-8zM542 600h8v8h-8z"/><path fill="#b4ab9f" d="M454 552h8v8h-8zM478 568h8v8h-8zM494 576h8v8h-8zM510 584h8v8h-8zM526 592h16v8h-16zM654 592h8v8h-8zM558 600h16v8h-16zM622 600h16v8h-16z"/><path fill="#b4aea2" d="M462 552h8v8h-8zM670 584h8v8h-8z"/><path fill="#bdb4a8" d="M486 552h8v8h-8zM502 560h8v8h-8zM510 568h16v8h-16zM534 576h16v8h-16zM670 576h8v8h-8zM558 584h24v8h-24zM646 584h8v8h-8z"/><path fill="#c3baae" d="M510 552h8v8h-8zM526 560h16v8h-16zM686 560h8v8h-8zM550 568h16v8h-16zM670 568h8v8h-8zM574 576h80v8h-80z"/><path fill="#c6bdb1" d="M526 552h8v8h-8zM550 560h8v8h-8zM574 568h32v8h-32zM638 568h24v8h-24z"/><path fill="#c9c0b4" d="M550 552h8v8h-8zM574 560h16v8h-16zM654 560h16v8h-16z"/><path fill="#8a8178" d="M382 560h8v8h-8zM382 576h8v8h-8zM390 584h8v8h-8z"/><path fill="#a2998d" d="M422 560h8v8h-8zM430 568h8v8h-8zM454 584h8v8h-8zM502 608h8v8h-8zM526 616h8v8h-8zM622 616h8v8h-8zM638 616h8v8h-8zM638 624h8v8h-8z"/><path fill="#aba599" d="M446 560h8v8h-8zM670 592h8v8h-8zM678 600h8v8h-8z"/><path fill="#aea89c" d="M454 560h8v8h-8zM678 584h8v8h-8zM686 592h8v8h-8zM646 600h8v8h-8z"/><path fill="#b1ab9f" d="M462 560h8v8h-8z"/><path fill="#bab1a5" d="M486 560h8v8h-8zM502 568h8v8h-8zM518 576h8v8h-8zM678 576h8v8h-8zM534 584h16v8h-16zM662 584h8v8h-8zM566 592h32v8h-32zM614 592h32v8h-32z"/><path fill="#878175" d="M382 568h8v8h-8z"/><path fill="#8a8175" d="M390 568h8v8h-8zM390 576h16v8h-16zM398 584h16v8h-16zM406 592h24v8h-24zM414 600h16v8h-16z"/><path fill="#8d8778" d="M398 568h8v8h-8zM454 608h8v8h-8zM478 632h8v8h-8zM470 640h16v8h-16z"/><path fill="#938d7e" d="M406 568h8v8h-8zM438 592h8v8h-8zM566 632h8v8h-8zM558 640h8v8h-8z"/><path fill="#999084" d="M414 568h8v8h-8zM446 592h8v8h-8zM606 624h8v8h-8zM606 632h8v8h-8z"/><path fill="#a59c90" d="M438 568h8v8h-8zM446 576h8v8h-8zM462 584h8v8h-8zM510 608h8v8h-8zM646 608h8v8h-8zM542 616h8v8h-8z"/><path fill="#a89f93" d="M446 568h8v8h-8zM454 576h8v8h-8zM470 584h8v8h-8zM502 600h8v8h-8zM638 608h8v8h-8zM566 616h8v8h-8zM598 616h16v8h-16z"/><path fill="#aba296" d="M454 568h8v8h-8zM462 576h8v8h-8zM478 584h8v8h-8zM494 592h8v8h-8zM510 600h8v8h-8zM654 600h8v8h-8zM630 608h8v8h-8z"/><path fill="#8d8478" d="M406 576h8v8h-8zM438 616h8v8h-8zM438 624h32v8h-32zM446 632h32v8h-32z"/><path fill="#938a7e" d="M414 576h8v8h-8zM550 640h8v8h-8z"/><path fill="#969084" d="M422 576h8v8h-8z"/><path fill="#9c9387" d="M430 576h8v8h-8zM438 584h8v8h-8zM614 624h8v8h-8z"/><path fill="#9f998d" d="M438 576h8v8h-8zM630 616h8v8h-8z"/><path fill="#b1ab9c" d="M486 576h8v8h-8zM502 584h8v8h-8zM638 600h8v8h-8z"/><path fill="#b7b1a2" d="M510 576h8v8h-8z"/><path fill="#8a8475" d="M414 584h8v8h-8zM430 600h8v8h-8zM430 608h24v8h-24zM446 616h8v8h-8z"/><path fill="#908a7b" d="M422 584h8v8h-8z"/><path fill="#968d81" d="M430 584h8v8h-8zM454 600h8v8h-8zM470 608h8v8h-8zM582 632h8v8h-8zM582 640h8v8h-8z"/><path fill="#9f968a" d="M446 584h8v8h-8zM590 624h8v8h-8zM630 624h8v8h-8z"/><path fill="#bdb4a5" d="M550 584h8v8h-8zM598 592h16v8h-16z"/><path fill="#bdb7a8" d="M638 584h8v8h-8z"/><path fill="#908778" d="M430 592h8v8h-8zM494 624h8v8h-8zM486 632h48v8h-48zM486 640h24v8h-24z"/><path fill="#9c9687" d="M454 592h8v8h-8z"/><path fill="#9f998a" d="M462 592h8v8h-8z"/><path fill="#a59c8d" d="M470 592h8v8h-8zM486 600h8v8h-8zM534 616h8v8h-8z"/><path fill="#a89f90" d="M478 592h8v8h-8zM494 600h8v8h-8zM518 608h8v8h-8zM550 616h16v8h-16z"/><path fill="#a8a293" d="M486 592h8v8h-8z"/><path fill="#b1a899" d="M510 592h8v8h-8zM534 600h8v8h-8zM566 608h48v8h-48z"/><path fill="#bab1a2" d="M558 592h8v8h-8z"/><path fill="#8d8475" d="M438 600h8v8h-8zM454 616h24v8h-24zM470 624h24v8h-24z"/><path fill="#938a7b" d="M446 600h8v8h-8zM462 608h8v8h-8zM478 616h8v8h-8zM502 624h8v8h-8zM542 632h24v8h-24zM526 640h24v8h-24z"/><path fill="#999384" d="M462 600h8v8h-8z"/><path fill="#9f9687" d="M470 600h8v8h-8zM486 608h8v8h-8zM510 616h8v8h-8zM542 624h16v8h-16zM598 624h8v8h-8z"/><path fill="#a2998a" d="M478 600h8v8h-8zM494 608h8v8h-8zM518 616h8v8h-8zM558 624h32v8h-32z"/><path fill="#aea596" d="M518 600h8v8h-8zM542 608h16v8h-16z"/><path fill="#b4ab9c" d="M550 600h8v8h-8z"/><path fill="#b7ae9f" d="M574 600h24v8h-24zM606 600h16v8h-16z"/><path fill="#aba299" d="M670 600h8v8h-8z"/><path fill="#9c9384" d="M478 608h8v8h-8zM502 616h8v8h-8zM526 624h16v8h-16z"/><path fill="#aba293" d="M526 608h16v8h-16zM574 616h24v8h-24z"/><path fill="#aea899" d="M614 608h8v8h-8z"/><path fill="#a89f96" d="M662 608h8v8h-8z"/><path fill="#968d7e" d="M486 616h8v8h-8zM510 624h8v8h-8zM574 632h8v8h-8zM566 640h16v8h-16z"/><path fill="#999081" d="M494 616h8v8h-8zM518 624h8v8h-8z"/><path fill="#a59f90" d="M614 616h8v8h-8z"/><path fill="#a59c93" d="M654 616h8v8h-8z"/><path fill="#938a78" d="M534 632h8v8h-8z"/><path fill="#969081" d="M590 632h16v8h-16zM590 640h16v8h-16z"/><path fill="#999387" d="M614 632h8v8h-8z"/><path fill="#90877b" d="M510 640h16v8h-16z"/></g></g>
<g filter="url(#blur1)"><g clip-path="url(#fclip)">
<rect x="300" y="285" width="170" height="285" fill="url(#fskin)"/>
<path d="M397,300 Q390,360 390,420 Q396,463 411,503 Q418,524 421,552 L430,570 L470,570 L470,290 Z" fill="url(#hairR)"/>
<g stroke-width="2.2" fill="none" opacity="0.45"><path d="M399,305 Q393,370 394,425 Q400,470 414,508 Q421,530 424,566" stroke="#f0d8b0"/><path d="M408,312 Q402,380 404,430 Q410,480 426,520 Q432,540 434,566" stroke="#b88050"/><path d="M418,318 Q414,390 418,450 Q424,500 436,540" stroke="#ecd0a4"/><path d="M430,324 Q432,400 434,460 Q440,510 444,560" stroke="#b07848"/><path d="M442,332 Q448,400 448,470 Q450,520 450,560" stroke="#e8c898"/><path d="M453,350 Q458,420 458,500" stroke="#b88050"/></g>
<path d="M304,318 L348,300 Q336,330 331,362 Q327,440 330,480 L324,520 L304,520 Z" fill="#d0a878"/>
<g stroke-width="1.5" fill="none" opacity="0.6"><path d="M318,318 Q314,420 320,505" stroke="#f0d4a4"/><path d="M330,312 Q321,380 326,505" stroke="#b48a5a"/><path d="M311,330 Q308,420 313,500" stroke="#c49a68"/><path d="M338,308 Q328,360 328,420" stroke="#f4dcb0"/></g>
<ellipse cx="366" cy="318" rx="22" ry="26" fill="#ecc4ae" opacity="0.45"/>
<rect x="300" y="285" width="170" height="285" fill="url(#fvert)"/>
<ellipse cx="362" cy="440" rx="26" ry="40" fill="#e6b8a4" opacity="0.3"/>
<path d="M326,505 Q345,545 384,563 L330,570 Z" fill="#a87060" opacity="0.25"/>
<path d="M331,356 Q337,348 346,349" stroke="#6a5040" stroke-width="4" fill="none" opacity="0.85"/>
<path d="M362,359.5 Q376,350 390,357.5" stroke="#6a5040" stroke-width="4.2" fill="none" opacity="0.85"/>
<ellipse cx="336" cy="388" rx="7" ry="10" fill="#a06858" opacity="0.3"/>
<ellipse cx="372" cy="394" rx="14" ry="10" fill="#a06858" opacity="0.3"/>
<ellipse cx="335.5" cy="386.5" rx="4" ry="8" fill="#c8c4c0"/>
<ellipse cx="335.5" cy="386.5" rx="3" ry="5" fill="#7a8284"/><ellipse cx="335.5" cy="386" rx="1.3" ry="2.6" fill="#222"/>
<path d="M332,380 Q336,376 340,381" stroke="#3a2a20" stroke-width="1.3" fill="none"/>
<ellipse cx="371.5" cy="392" rx="10" ry="7.5" fill="#c8c4c0"/>
<ellipse cx="370" cy="391.5" rx="4.8" ry="6" fill="#7a8284"/><ellipse cx="370" cy="391" rx="1.8" ry="3" fill="#222"/>
<path d="M362,387 Q372,381 382,389" stroke="#2a2020" stroke-width="1.8" fill="none"/>
<ellipse cx="352" cy="440" rx="7" ry="14" fill="#c08878" opacity="0.22"/>
<ellipse cx="341" cy="450.5" rx="2" ry="2.8" fill="#5a3028" opacity="0.85"/><ellipse cx="350.5" cy="452" rx="2" ry="2.4" fill="#5a3028" opacity="0.75"/>
<path d="M344,486 Q350,479 358,482 Q366,486 370,495 Q364,505 354,503 Q345,498 344,486 Z" fill="#c88a84"/>
<path d="M345,488 Q356,490 368,495" stroke="#9a5a54" stroke-width="1.1" fill="none"/>
<circle cx="390.3" cy="477.3" r="1" fill="#7a4a3a"/>
<g style="mix-blend-mode:multiply"><g filter="url(#sblur)"><path fill="#d4d4d4" d="M298 284h48v8h-48zM298 292h48v8h-48zM298 300h40v8h-40zM298 308h40v8h-40zM298 316h40v8h-40zM314 324h8v8h-8zM322 348h8v8h-8zM322 356h8v8h-8zM322 364h8v8h-8zM322 372h8v8h-8zM322 380h8v8h-8zM322 388h8v8h-8zM322 396h8v8h-8zM330 428h8v8h-8zM330 436h8v8h-8zM338 452h8v8h-8zM338 460h8v8h-8zM346 476h8v8h-8zM346 484h8v8h-8zM354 492h8v8h-8zM354 500h8v8h-8zM362 508h8v8h-8zM370 524h8v8h-8zM378 532h8v8h-8zM386 540h8v8h-8zM394 548h8v8h-8zM418 572h8v8h-8z"/><path fill="#dcdcdc" d="M346 284h8v8h-8zM346 292h8v8h-8zM338 308h8v8h-8zM338 316h8v8h-8zM338 324h8v8h-8zM330 348h8v8h-8zM330 356h8v8h-8zM330 364h8v8h-8zM330 372h8v8h-8zM330 380h8v8h-8zM330 388h8v8h-8zM338 412h8v8h-8zM338 420h8v8h-8zM338 428h8v8h-8zM346 444h8v8h-8zM346 452h8v8h-8zM354 468h8v8h-8zM354 476h8v8h-8zM362 484h8v8h-8zM362 492h8v8h-8zM370 500h8v8h-8zM378 508h8v8h-8zM378 516h8v8h-8zM386 524h8v8h-8zM394 532h8v8h-8zM402 540h8v8h-8zM402 548h8v8h-8zM410 556h8v8h-8zM418 564h16v8h-16zM434 572h8v8h-8z"/><path fill="#e0e0e0" d="M354 284h8v8h-8zM346 300h8v8h-8zM346 308h8v8h-8zM338 332h8v8h-8zM338 340h8v8h-8zM338 348h8v8h-8zM338 356h8v8h-8zM338 364h8v8h-8zM338 372h8v8h-8zM338 380h8v8h-8zM338 388h8v8h-8zM338 396h8v8h-8zM338 404h8v8h-8zM346 420h8v8h-8zM346 428h8v8h-8zM346 436h8v8h-8zM354 444h8v8h-8zM354 452h8v8h-8zM354 460h8v8h-8zM362 468h8v8h-8zM362 476h8v8h-8zM370 484h8v8h-8zM370 492h8v8h-8zM378 500h8v8h-8zM386 508h8v8h-8zM386 516h8v8h-8zM394 524h8v8h-8zM402 532h8v8h-8zM410 540h8v8h-8zM410 548h16v8h-16zM418 556h16v8h-16zM434 564h8v8h-8zM442 572h8v8h-8z"/><path fill="#e8e8e8" d="M362 284h8v8h-8zM362 292h8v8h-8zM354 308h8v8h-8zM354 316h8v8h-8zM354 324h8v8h-8zM354 332h8v8h-8zM354 340h8v8h-8zM354 348h8v8h-8zM354 356h8v8h-8zM354 364h8v8h-8zM354 372h8v8h-8zM354 380h8v8h-8zM354 388h8v8h-8zM354 396h8v8h-8zM354 404h8v8h-8zM354 412h8v8h-8zM362 420h8v8h-8zM362 428h8v8h-8zM362 436h8v8h-8zM370 444h8v8h-8zM370 452h8v8h-8zM370 460h8v8h-8zM378 468h8v8h-8zM378 476h8v8h-8zM386 484h8v8h-8zM386 492h16v8h-16zM394 500h8v8h-8zM402 508h8v8h-8zM402 516h16v8h-16zM410 524h16v8h-16zM418 532h8v8h-8zM426 540h8v8h-8zM434 548h8v8h-8zM442 556h16v8h-16zM450 564h16v8h-16zM466 572h8v8h-8z"/><path fill="#ececec" d="M370 284h8v8h-8zM370 292h8v8h-8zM362 300h8v8h-8zM362 308h8v8h-8zM362 316h8v8h-8zM362 324h8v8h-8zM362 332h8v8h-8zM362 340h8v8h-8zM362 348h8v8h-8zM362 356h8v8h-8zM362 364h8v8h-8zM362 372h8v8h-8zM362 380h8v8h-8zM362 388h8v8h-8zM362 396h8v8h-8zM362 404h8v8h-8zM362 412h16v8h-16zM370 420h8v8h-8zM370 428h8v8h-8zM370 436h8v8h-8zM378 444h8v8h-8zM378 452h8v8h-8zM378 460h16v8h-16zM386 468h8v8h-8zM386 476h16v8h-16zM394 484h8v8h-8zM402 492h8v8h-8zM402 500h16v8h-16zM410 508h8v8h-8zM418 516h8v8h-8zM426 524h8v8h-8zM426 532h16v8h-16zM434 540h16v8h-16zM442 548h16v8h-16zM458 556h8v8h-8zM466 564h16v8h-16zM474 572h8v8h-8z"/><path fill="#f0f0f0" d="M378 284h8v8h-8zM378 292h8v8h-8zM370 300h8v8h-8zM370 308h8v8h-8zM370 316h8v8h-8zM370 324h8v8h-8zM370 332h8v8h-8zM370 340h8v8h-8zM370 348h8v8h-8zM370 356h8v8h-8zM370 364h8v8h-8zM370 372h8v8h-8zM370 380h8v8h-8zM370 388h8v8h-8zM370 396h8v8h-8zM370 404h16v8h-16zM378 412h8v8h-8zM378 420h8v8h-8zM378 428h8v8h-8zM378 436h16v8h-16zM386 444h8v8h-8zM386 452h16v8h-16zM394 460h8v8h-8zM394 468h16v8h-16zM402 476h8v8h-8zM402 484h16v8h-16zM410 492h8v8h-8zM418 500h8v8h-8zM418 508h16v8h-16zM426 516h16v8h-16zM434 524h16v8h-16zM442 532h16v8h-16zM450 540h16v8h-16zM458 548h16v8h-16zM466 556h16v8h-16z"/><path fill="#f4f4f4" d="M386 284h8v8h-8zM386 292h8v8h-8zM378 300h16v8h-16zM378 308h8v8h-8zM378 316h8v8h-8zM378 324h8v8h-8zM378 332h8v8h-8zM378 340h8v8h-8zM378 348h8v8h-8zM378 356h8v8h-8zM378 364h8v8h-8zM378 372h8v8h-8zM378 380h8v8h-8zM378 388h16v8h-16zM378 396h16v8h-16zM386 404h8v8h-8zM386 412h8v8h-8zM386 420h16v8h-16zM386 428h16v8h-16zM394 436h8v8h-8zM394 444h16v8h-16zM402 452h8v8h-8zM402 460h16v8h-16zM410 468h8v8h-8zM410 476h16v8h-16zM418 484h8v8h-8zM418 492h16v8h-16zM426 500h16v8h-16zM434 508h16v8h-16zM442 516h16v8h-16zM450 524h16v8h-16zM458 532h16v8h-16zM466 540h16v8h-16zM474 548h8v8h-8z"/><path fill="#f8f8f8" d="M394 284h16v8h-16zM394 292h8v8h-8zM394 300h8v8h-8zM386 308h16v8h-16zM386 316h16v8h-16zM386 324h16v8h-16zM386 332h8v8h-8zM386 340h8v8h-8zM386 348h8v8h-8zM386 356h8v8h-8zM386 364h16v8h-16zM386 372h16v8h-16zM386 380h16v8h-16zM394 388h8v8h-8zM394 396h8v8h-8zM394 404h16v8h-16zM394 412h16v8h-16zM402 420h8v8h-8zM402 428h16v8h-16zM402 436h16v8h-16zM410 444h8v8h-8zM410 452h16v8h-16zM418 460h8v8h-8zM418 468h16v8h-16zM426 476h16v8h-16zM426 484h16v8h-16zM434 492h16v8h-16zM442 500h16v8h-16zM450 508h16v8h-16zM458 516h16v8h-16zM466 524h16v8h-16zM474 532h8v8h-8z"/><path fill="#fcfcfc" d="M410 284h8v8h-8zM402 292h16v8h-16zM402 300h16v8h-16zM402 308h8v8h-8zM402 316h8v8h-8zM402 324h8v8h-8zM394 332h16v8h-16zM394 340h16v8h-16zM394 348h16v8h-16zM394 356h16v8h-16zM402 364h8v8h-8zM402 372h8v8h-8zM402 380h16v8h-16zM402 388h16v8h-16zM402 396h16v8h-16zM410 404h8v8h-8zM410 412h16v8h-16zM410 420h16v8h-16zM418 428h8v8h-8zM418 436h16v8h-16zM418 444h16v8h-16zM426 452h16v8h-16zM426 460h16v8h-16zM434 468h16v8h-16zM442 476h16v8h-16zM442 484h16v8h-16zM450 492h16v8h-16zM458 500h16v8h-16zM466 508h16v8h-16zM474 516h8v8h-8z"/><path fill="#ffffff" d="M418 284h64v8h-64zM418 292h64v8h-64zM418 300h64v8h-64zM410 308h72v8h-72zM410 316h72v8h-72zM410 324h72v8h-72zM410 332h72v8h-72zM410 340h72v8h-72zM410 348h72v8h-72zM410 356h72v8h-72zM410 364h72v8h-72zM410 372h72v8h-72zM418 380h64v8h-64zM418 388h64v8h-64zM418 396h64v8h-64zM418 404h64v8h-64zM426 412h56v8h-56zM426 420h56v8h-56zM426 428h56v8h-56zM434 436h48v8h-48zM434 444h48v8h-48zM442 452h40v8h-40zM442 460h40v8h-40zM450 468h32v8h-32zM458 476h24v8h-24zM458 484h24v8h-24zM466 492h16v8h-16zM474 500h8v8h-8z"/><path fill="#e4e4e4" d="M354 292h8v8h-8zM354 300h8v8h-8zM346 316h8v8h-8zM346 324h8v8h-8zM346 332h8v8h-8zM346 340h8v8h-8zM346 348h8v8h-8zM346 356h8v8h-8zM346 364h8v8h-8zM346 372h8v8h-8zM346 380h8v8h-8zM346 388h8v8h-8zM346 396h8v8h-8zM346 404h8v8h-8zM346 412h8v8h-8zM354 420h8v8h-8zM354 428h8v8h-8zM354 436h8v8h-8zM362 444h8v8h-8zM362 452h8v8h-8zM362 460h8v8h-8zM370 468h8v8h-8zM370 476h8v8h-8zM378 484h8v8h-8zM378 492h8v8h-8zM386 500h8v8h-8zM394 508h8v8h-8zM394 516h8v8h-8zM402 524h8v8h-8zM410 532h8v8h-8zM418 540h8v8h-8zM426 548h8v8h-8zM434 556h8v8h-8zM442 564h8v8h-8zM450 572h16v8h-16z"/><path fill="#d8d8d8" d="M338 300h8v8h-8zM330 324h8v8h-8zM330 332h8v8h-8zM330 340h8v8h-8zM330 396h8v8h-8zM330 404h8v8h-8zM330 412h8v8h-8zM330 420h8v8h-8zM338 436h8v8h-8zM338 444h8v8h-8zM346 460h8v8h-8zM346 468h8v8h-8zM354 484h8v8h-8zM362 500h8v8h-8zM370 508h8v8h-8zM370 516h8v8h-8zM378 524h8v8h-8zM386 532h8v8h-8zM394 540h8v8h-8zM402 556h8v8h-8zM410 564h8v8h-8zM426 572h8v8h-8z"/><path fill="#d0d0d0" d="M298 324h16v8h-16zM322 324h8v8h-8zM298 332h32v8h-32zM298 340h32v8h-32zM298 348h24v8h-24zM298 356h24v8h-24zM298 364h24v8h-24zM298 372h24v8h-24zM298 380h16v8h-16zM298 388h8v8h-8zM322 404h8v8h-8zM322 412h8v8h-8zM322 420h8v8h-8zM330 444h8v8h-8zM330 452h8v8h-8zM338 468h8v8h-8zM338 476h8v8h-8zM346 492h8v8h-8zM354 508h8v8h-8zM362 516h8v8h-8zM370 532h8v8h-8zM378 540h8v8h-8zM386 548h8v8h-8zM394 556h8v8h-8zM402 564h8v8h-8zM410 572h8v8h-8z"/><path fill="#cccccc" d="M314 380h8v8h-8zM306 388h16v8h-16zM298 396h24v8h-24zM298 404h24v8h-24zM298 412h24v8h-24zM298 420h24v8h-24zM298 428h32v8h-32zM298 436h32v8h-32zM298 444h32v8h-32zM298 452h32v8h-32zM298 460h40v8h-40zM298 468h16v8h-16zM330 468h8v8h-8zM298 476h24v8h-24zM298 484h8v8h-8zM338 484h8v8h-8zM346 500h8v8h-8zM354 516h8v8h-8zM362 524h8v8h-8zM370 540h8v8h-8zM378 548h8v8h-8zM386 556h8v8h-8zM394 564h8v8h-8zM402 572h8v8h-8z"/><path fill="#c8c8c8" d="M314 468h16v8h-16zM322 476h16v8h-16zM306 484h32v8h-32zM298 492h48v8h-48zM298 500h48v8h-48zM298 508h56v8h-56zM298 516h56v8h-56zM298 524h64v8h-64zM298 532h72v8h-72zM298 540h72v8h-72zM298 548h80v8h-80zM298 556h88v8h-88zM298 564h96v8h-96zM298 572h104v8h-104z"/></g></g>
</g></g>
<g stroke="#a8a8a8" stroke-width="1" fill="none"><line x1="223.2" y1="181.7" x2="555.4" y2="118.5"/><line x1="223.2" y1="181.7" x2="251.75" y2="611"/><line x1="251.75" y1="611" x2="546.5" y2="793.7"/><line x1="348.4" y1="158" x2="351" y2="240"/><line x1="354" y1="320" x2="367.7" y2="683"/><line x1="555.4" y1="118.5" x2="554.5" y2="180"/><line x1="547.5" y1="639" x2="546.5" y2="793.7"/><line x1="238" y1="408.5" x2="306" y2="424"/><line x1="422" y1="452" x2="550.3" y2="485.3"/></g>
<g stroke="#c8c8c8" stroke-width="1" fill="none" opacity="0.9"><line x1="351" y1="240" x2="354" y2="320" stroke="#a8a8a8"/><line x1="554.5" y1="180" x2="547.5" y2="639" stroke="#8a8a8a" stroke-dasharray="6,1.5"/></g>
<g stroke="#26ac1c" stroke-width="1.3" fill="none" stroke-linejoin="round"><line x1="200.9" y1="180.5" x2="233.6" y2="182.7"/><polygon points="233.6,176.9 244.7,183.3 234.3,188.5"/><line x1="323.6" y1="155.5" x2="360.5" y2="159.2"/><polygon points="360.5,152.2 371.9,160.5 360.5,167"/><line x1="529.2" y1="114" x2="568.6" y2="121.7"/><polygon points="568.6,111.1 580.9,123.1 568.6,130.5"/><line x1="217.1" y1="410.5" x2="247.8" y2="406.2"/><polygon points="247.8,401.4 257.9,405.7 248.5,412.3"/><line x1="526.6" y1="490.5" x2="562.6" y2="482.3"/><polygon points="562.6,473.9 574,479.6 562.6,490.8"/><line x1="232" y1="617" x2="261.3" y2="608.9"/><polygon points="261.3,603.4 270.2,605.9 261.3,613.6"/><line x1="345.4" y1="691.9" x2="378.5" y2="679.2"/><polygon points="378.5,673.4 388,674.7 378.5,684.3"/><line x1="524.3" y1="807.5" x2="557.7" y2="788.5"/><polygon points="557.7,780.4 568.6,781.5 558.2,794"/></g>
<g fill="none" stroke-linecap="round">
<rect x="344.3" y="426.4" width="28" height="22.2" rx="3" fill="rgba(175,155,145,0.3)" stroke="#a08c84" stroke-width="0.9"/>
<polyline points="346.2,410.5 374.8,411.7 374.8,439" stroke="#a08a70" stroke-width="1.2"/>
<line x1="374.8" y1="425" x2="374.8" y2="439" stroke="#b07858" stroke-width="1.2"/>
<line x1="333.5" y1="411.7" x2="346.2" y2="410.5" stroke="#58b040" stroke-width="1.6"/>
<line x1="332.2" y1="411.7" x2="332.2" y2="441.6" stroke="#3a80e8" stroke-width="2"/>
<line x1="332.2" y1="441.6" x2="306" y2="446" stroke="#3a80e8" stroke-width="2.2"/>
<line x1="332.2" y1="441.6" x2="349.4" y2="445.5" stroke="#3a80e8" stroke-width="1.8"/>
<polygon points="287.6,448 307.4,442.3 307.4,449.9" fill="#3a80e8" stroke="#3a80e8" stroke-width="0.8" stroke-linejoin="round"/>
<line x1="357" y1="437.8" x2="357" y2="378" stroke="#7a7a5a" stroke-width="3"/>
<line x1="357" y1="437.8" x2="357" y2="378" stroke="#a0a070" stroke-width="1.6"/>
<polygon points="352.3,379.3 357,359 361.5,379.3" fill="#a4a070" stroke="#7a7a5a" stroke-width="0.8" stroke-linejoin="round"/>
<line x1="358.9" y1="437.8" x2="391" y2="446" stroke="#8a6a5a" stroke-width="2.8"/>
<line x1="358.9" y1="437.8" x2="391" y2="446" stroke="#b88a74" stroke-width="1.5"/>
<line x1="349.4" y1="445.5" x2="364.6" y2="443.5" stroke="#d04020" stroke-width="2"/>
<polygon points="390.7,443.5 404.7,448.6 390.7,450.5" fill="#c0907a" stroke="#8a6a5a" stroke-width="0.8" stroke-linejoin="round"/>
</g>
<g stroke-width="2.5" stroke-linecap="round">
<line x1="947" y1="796" x2="947" y2="810" stroke="#5ed04a"/>
<line x1="947" y1="810" x2="935.5" y2="813.3" stroke="#6a6ae8"/>
<line x1="947" y1="810" x2="958" y2="813.5" stroke="#d06060"/>
</g>
<text x="944.3" y="791.5" font-size="6" fill="#5ed04a" font-family="Liberation Sans">Y</text>
<text x="928" y="817.5" font-size="6" fill="#6a6ae8" font-family="Liberation Sans">Z</text>
<text x="960.5" y="817.5" font-size="6" fill="#c06060" font-family="Liberation Sans">X</text>
</g></svg>
<!--VP_END-->
<div class="a" style="left:976px;top:38px;width:2px;height:808px;background:#1f1f1f"></div>
<!-- layers panel -->
<div class="a" style="left:978px;top:38px;width:263px;height:808px;background:#333"></div>
<div class="a" style="left:1241px;top:38px;width:1px;height:808px;background:#202020"></div>
<!-- layers tabs -->
<div class="a" style="left:978px;top:37.5px;width:63px;height:2px;background:#3a86d8"></div>
<div class="a" style="left:1041px;top:38px;width:129px;height:21.7px;background:#262626"></div>
<div class="t" style="left:984px;top:46.2px;font-size:8.5px;font-weight:700;color:#e4e4e4">LAYERS</div>
<svg style="left:1025px;top:47px" width="8" height="8"><g stroke="#bdbdbd" stroke-width="1"><line x1="0.5" y1="0.5" x2="7" y2="7"/><line x1="7" y1="0.5" x2="0.5" y2="7"/></g></svg>
<div class="t" style="left:1046.3px;top:46.2px;font-size:8.5px;font-weight:700;color:#d8d8d8">TEXTURE SET LIST</div>
<div class="t" style="left:1134.2px;top:46.2px;font-size:8.5px;font-weight:700;color:#d8d8d8">ASSETS</div>
<!-- base color dropdown -->
<div class="a" style="left:982px;top:64.3px;width:67px;height:20.4px;background:#2e2e2e;border:1px solid #3e3e3e;border-radius:3px"></div>
<div class="t" style="left:987px;top:71.2px;font-size:8.6px;color:#d8d8d8;letter-spacing:-0.2px">Base color</div>
<svg style="left:1036px;top:72px" width="9" height="6"><polyline points="0.5,0.8 4,4.5 7.5,0.8" stroke="#bbb" stroke-width="1" fill="none"/></svg>
<!-- layers toolbar icons -->
<svg style="left:1080px;top:64px" width="160" height="22" viewBox="1080 64 160 22">
<g stroke="#d6d6d6" fill="#d6d6d6" stroke-width="1.2" stroke-linejoin="round" stroke-linecap="round">
<g transform="translate(1091,74.5)"><line x1="-5.8" y1="5.6" x2="3.4" y2="-3.6" stroke-width="1.5"/><g stroke-width="0.8"><line x1="3.6" y1="-7.5" x2="3.6" y2="-5.5"/><line x1="6.5" y1="-3.8" x2="4.5" y2="-3.8"/><line x1="6" y1="-6.5" x2="4.6" y2="-5.1"/><line x1="1.5" y1="-6.2" x2="2.6" y2="-5"/></g><polyline points="2,3 4,5 6,3" fill="none" stroke-width="1.1"/></g>
<g transform="translate(1113.5,74.5)"><rect x="-6.5" y="-6.3" width="13" height="12.5" stroke-width="0"/><path d="M3,-2.2 A4,4 0 1 0 2.5,3" stroke="#333" stroke-width="2.4" fill="none"/><polyline points="1,1.8 3,3.8 5,1.8" fill="none" stroke="#333" stroke-width="2.6"/><polyline points="1,2 3,4 5,2" fill="none" stroke-width="1.1"/></g>
<g transform="translate(1136,74.5)"><line x1="-2" y1="2" x2="6" y2="-6" stroke-width="1.4"/><path d="M-2.5,1 L-0.8,2.8 Q-3,6.5 -6.5,6.5 Q-6,3 -2.5,1 Z"/></g>
<g transform="translate(1158.5,74.5)"><polygon points="-6,-1 -1,-6 5,0 0,6" fill="none"/><polygon points="-5.2,-0.3 4.2,-0.3 0,5.2"/><line x1="-1" y1="-6" x2="-2" y2="-8" stroke-width="0.9"/><circle cx="5.5" cy="4.5" r="1.2"/></g>
<g transform="translate(1180.5,74.5)"><path d="M-5.5,2 A6,6 0 0 1 4,-5 A4,4 0 0 0 -1,3 A3,3 0 0 0 0,6 A6,6 0 0 1 -5.5,2 Z"/><path d="M0.5,-2 A4.5,4.5 0 0 1 6,1" fill="none"/><polyline points="1,3 3,5 5,3" fill="none"/></g>
<g transform="translate(1203,74.5)"><path d="M-6.5,-5 H-2 L-0.5,-3.5 H6.5 V5 H-6.5 Z"/></g>
<g transform="translate(1225.5,74.5)" fill="none"><line x1="-6.5" y1="-4.5" x2="6.5" y2="-4.5"/><rect x="-2" y="-7" width="4" height="2.5"/><path d="M-5,-4.5 L-4.5,6.5 H4.5 L5,-4.5"/><line x1="-2" y1="-2" x2="-2" y2="4.5"/><line x1="0" y1="-2" x2="0" y2="4.5"/><line x1="2" y1="-2" x2="2" y2="4.5"/></g>
</g></svg>
<!-- layer row -->
<div class="a" style="left:978px;top:93px;width:262.5px;height:36.5px;background:#262626;border:1px solid #3b7fd0"></div>
<svg style="left:982px;top:103px" width="14" height="11"><path d="M1,5.5 Q7,-1 13,5.5 Q7,12 1,5.5 Z" fill="none" stroke="#d0d0d0" stroke-width="1"/><circle cx="7" cy="5.5" r="2.1" fill="#d0d0d0"/><circle cx="7.6" cy="4.9" r="0.8" fill="#262626"/></svg>
<div class="a" style="left:1000px;top:97.2px;width:21px;height:21.4px;border:1.5px solid #3b7fd0;border-radius:3px;background:#1e1e1e"></div>
<svg style="left:1000px;top:97px" width="22" height="22"><defs><radialGradient id="lt" cx="0.3" cy="0.3" r="0.8"><stop offset="0" stop-color="#e6e6e6"/><stop offset="0.5" stop-color="#9a9a9a"/><stop offset="1" stop-color="#3a3a3a"/></radialGradient></defs><circle cx="10.5" cy="10.7" r="8.6" fill="url(#lt)"/></svg>
<div class="a" style="left:1001.6px;top:122.3px;width:17.4px;height:4px;background:#4c4c4c"></div>
<div class="t" style="left:1025px;top:107.6px;font-size:8.6px;color:#d8d8d8;letter-spacing:-0.1px">Fill layer 1</div>
<div class="a" style="left:1180.5px;top:102.5px;width:17px;height:17px;border:1px dotted #5a5a5a"></div>
<div class="t" style="left:1204.8px;top:99px;font-size:8.6px;color:#d8d8d8">Norm</div>
<div class="t" style="left:1208.7px;top:116.2px;font-size:8.6px;color:#d8d8d8">100</div>
<svg style="left:1227px;top:101px" width="8" height="24"><g stroke="#aaa" stroke-width="0.9" fill="none"><polyline points="0.8,1 3.5,3.8 6.2,1"/><polyline points="0.8,18.3 3.5,21.1 6.2,18.3"/></g></svg>
<!-- properties -->
<div class="a" style="left:1242px;top:38px;width:265px;height:808px;background:#333"></div>
<div class="a" style="left:1507px;top:38px;width:1px;height:808px;background:#202020"></div>
<div class="a" style="left:1508px;top:38px;width:28px;height:808px;background:#333"></div>
<!--PROPS_START-->
<div class="a" style="left:1242.0px;top:37.5px;width:111.6px;height:2.0px;background:#3a86d8"></div>
<div class="a" style="left:1353.6px;top:38.0px;width:110.9px;height:21.7px;background:#262626"></div>
<div class="t" style="left:1248.1px;top:46.4px;font-size:8.5px;color:#e4e4e4;font-weight:700;">PROPERTIES - FILL</div>
<svg style="left:1338px;top:47px" width="8" height="8"><g stroke="#bdbdbd" stroke-width="1"><line x1="0.5" y1="0.5" x2="7" y2="7"/><line x1="7" y1="0.5" x2="0.5" y2="7"/></g></svg>
<div class="t" style="left:1359.4px;top:46.4px;font-size:8.5px;color:#d8d8d8;font-weight:700;letter-spacing:-0.1px;">TEXTURE SET SETTINGS</div>
<div class="a" style="left:1242.0px;top:63.8px;width:26.0px;height:25.5px;background:#262626"></div>
<div class="a" style="left:1268.0px;top:63.1px;width:25.6px;height:1.8px;background:#3a86d8"></div>
<div class="a" style="left:1293.6px;top:88.8px;width:213.4px;height:1.0px;background:#2a2a2a"></div>
<div class="a" style="left:1293.0px;top:63.8px;width:1.0px;height:25.5px;background:#2c2c2c"></div>
<svg style="left:1242px;top:63px" width="60" height="27" viewBox="1242 63 60 27">
<g fill="#d0d0d0" stroke="none">
<rect x="1249" y="70.5" width="12.5" height="11.5" fill="none" stroke="#d0d0d0" stroke-width="1.2"/>
<rect x="1250.5" y="72" width="9.5" height="1.8"/>
<rect x="1250.5" y="75" width="3" height="1.3"/><rect x="1250.5" y="77.5" width="3" height="1.3"/>
<circle cx="1258.5" cy="79" r="3.6" fill="#282828"/><circle cx="1258.5" cy="79" r="2.6"/><circle cx="1258.5" cy="79" r="1" fill="#282828"/>
<circle cx="1280.8" cy="76.3" r="6"/>
<path d="M1277.4,76.2 A4.9,4.9 0 0 0 1286.9,76.2" stroke="#333" stroke-width="1.3" fill="none"/>
</g></svg>
<div class="t" style="left:1256.0px;top:105.7px;font-size:9.4px;color:#e8e8e8;font-weight:700;">FILL</div>
<div class="t" style="left:1255.8px;top:131.4px;font-size:8.6px;color:#cfcfcf;">Projection</div>
<div class="a" style="left:1325.0px;top:124.0px;width:159.0px;height:21.0px;background:#242424;border:1px solid #4c4c4c;border-radius:3px"></div>
<div class="t" style="left:1330.0px;top:131.4px;font-size:8.6px;color:#dcdcdc;letter-spacing:-0.15px;">Warp projection</div>
<svg style="left:1471px;top:132.0px" width="9" height="6"><polyline points="0.8,0.8 4,4.2 7.2,0.8" stroke="#c8c8c8" stroke-width="1.1" fill="none"/></svg>
<div class="t" style="left:1255.8px;top:155.4px;font-size:8.6px;color:#cfcfcf;">Filtering</div>
<div class="a" style="left:1325.0px;top:148.0px;width:159.0px;height:21.0px;background:#2b2b2b;border:1px solid #4c4c4c;border-radius:3px"></div>
<div class="t" style="left:1330.0px;top:155.4px;font-size:8.6px;color:#dcdcdc;letter-spacing:-0.15px;">Bilinear&nbsp;|&thinsp;HQ</div>
<svg style="left:1471px;top:156.0px" width="9" height="6"><polyline points="0.8,0.8 4,4.2 7.2,0.8" stroke="#c8c8c8" stroke-width="1.1" fill="none"/></svg>
<div class="t" style="left:1255.8px;top:179.4px;font-size:8.6px;color:#cfcfcf;">UV Wrap</div>
<div class="a" style="left:1325.0px;top:172.0px;width:159.0px;height:21.0px;background:#2b2b2b;border:1px solid #4c4c4c;border-radius:3px"></div>
<div class="t" style="left:1330.0px;top:179.4px;font-size:8.6px;color:#dcdcdc;letter-spacing:-0.15px;">Repeat</div>
<svg style="left:1471px;top:180.0px" width="9" height="6"><polyline points="0.8,0.8 4,4.2 7.2,0.8" stroke="#c8c8c8" stroke-width="1.1" fill="none"/></svg>
<div class="t" style="left:1255.8px;top:203.4px;font-size:8.6px;color:#cfcfcf;">Shape Crop</div>
<div class="a" style="left:1325.0px;top:196.0px;width:159.0px;height:21.0px;background:#2b2b2b;border:1px solid #4c4c4c;border-radius:3px"></div>
<div class="t" style="left:1330.0px;top:203.4px;font-size:8.6px;color:#dcdcdc;letter-spacing:-0.15px;">Projection Extends Outside Shape</div>
<svg style="left:1471px;top:204.0px" width="9" height="6"><polyline points="0.8,0.8 4,4.2 7.2,0.8" stroke="#c8c8c8" stroke-width="1.1" fill="none"/></svg>
<div class="t" style="left:1255.8px;top:228.7px;font-size:8.6px;color:#cfcfcf;letter-spacing:-0.1px;">Projection Depth</div>
<div class="t" style="right:55.6px;top:222.2px;font-size:8.6px;color:#cfcfcf;letter-spacing:0.3px;">0.1</div>
<div class="t" style="left:1268.8px;top:251.8px;font-size:9.2px;color:#e6e6e6;font-weight:700;">Depth Culling</div>
<div class="a" style="left:1471.0px;top:249.5px;width:13.0px;height:12.9px;background:#c6c6c6;border-radius:2px"></div>
<div class="t" style="left:1280.5px;top:275.7px;font-size:8.6px;color:#cfcfcf;">Hardness</div>
<div class="t" style="right:55.6px;top:269.4px;font-size:8.6px;color:#cfcfcf;letter-spacing:0.3px;">0.75</div>
<div class="t" style="left:1268.5px;top:302.7px;font-size:9.4px;color:#e6e6e6;font-weight:700;">UV transformations</div>
<div class="t" style="left:1267.6px;top:325.0px;font-size:8.6px;color:#cfcfcf;">Scale</div>
<div class="a" style="left:1304.4px;top:317.6px;width:163.4px;height:20.2px;background:#2b2b2b;border:1px solid #474747;border-radius:3px"></div>
<div class="t" style="left:1309.5px;top:325.0px;font-size:8.6px;color:#dcdcdc;">Tiling</div>
<svg style="left:1455px;top:325.5px" width="9" height="6"><polyline points="0.8,0.8 4,4.2 7.2,0.8" stroke="#c8c8c8" stroke-width="1.1" fill="none"/></svg>
<div class="t" style="left:1267.6px;top:350.7px;font-size:8.6px;color:#cfcfcf;">Tiling</div>
<div class="t" style="right:168.0px;top:344.1px;font-size:8.6px;color:#cfcfcf;">1</div>
<div class="a" style="left:1374.4px;top:342.4px;width:22.5px;height:22.5px;background:#4a4a4a;border-radius:3px"></div>
<div class="t" style="right:73.6px;top:344.1px;font-size:8.6px;color:#6a6a6a;">1</div>
<div class="t" style="left:1267.6px;top:378.6px;font-size:8.6px;color:#cfcfcf;">Rotation</div>
<div class="t" style="right:71.6px;top:371.7px;font-size:8.6px;color:#cfcfcf;">0</div>
<div class="t" style="left:1267.6px;top:406.7px;font-size:8.6px;color:#cfcfcf;">Offset</div>
<div class="t" style="right:171.0px;top:399.7px;font-size:8.6px;color:#cfcfcf;">0</div>
<div class="t" style="right:71.6px;top:399.7px;font-size:8.6px;color:#cfcfcf;">0</div>
<div class="t" style="left:1268.5px;top:433.6px;font-size:9.4px;color:#e6e6e6;font-weight:700;">3D projection settings</div>
<div class="a" style="left:1255.7px;top:458.0px;width:228.1px;height:1.0px;background:#2a2a2a"></div>
<div class="t" style="left:1256.0px;top:472.2px;font-size:9.2px;color:#e6e6e6;font-weight:700;">MATERIAL</div>
<div class="a" style="left:1255.7px;top:497.0px;width:34.0px;height:16.0px;background:#474747;border:1px solid #8a8a8a;border-radius:3px"></div>
<div class="t" style="left:1272.7px;transform:translateX(-50%);top:501.0px;font-size:9.2px;color:#e6e6e6;font-weight:700;">color</div>
<div class="a" style="left:1321.0px;top:497.0px;width:33.6px;height:15.8px;background:#2b2b2b;border:1px solid #454545;border-radius:3px"></div>
<div class="t" style="left:1338.0px;transform:translateX(-50%);top:501.0px;font-size:9.2px;color:#e6e6e6;font-weight:700;">height</div>
<div class="a" style="left:1385.4px;top:497.0px;width:33.6px;height:15.8px;background:#2b2b2b;border:1px solid #454545;border-radius:3px"></div>
<div class="t" style="left:1402.4px;transform:translateX(-50%);top:501.0px;font-size:9.2px;color:#e6e6e6;font-weight:700;">rough</div>
<div class="a" style="left:1450.2px;top:497.0px;width:33.6px;height:15.8px;background:#2b2b2b;border:1px solid #454545;border-radius:3px"></div>
<div class="t" style="left:1467.2px;transform:translateX(-50%);top:501.0px;font-size:9.2px;color:#e6e6e6;font-weight:700;">metal</div>
<div class="a" style="left:1255.7px;top:517.6px;width:33.6px;height:15.8px;background:#2b2b2b;border:1px solid #454545;border-radius:3px"></div>
<div class="t" style="left:1272.7px;transform:translateX(-50%);top:521.6px;font-size:9.2px;color:#e6e6e6;font-weight:700;">nrm</div>
<div class="a" style="left:1321.0px;top:517.6px;width:33.6px;height:15.8px;background:#2b2b2b;border:1px solid #454545;border-radius:3px"></div>
<div class="t" style="left:1338.0px;transform:translateX(-50%);top:521.6px;font-size:9.2px;color:#e6e6e6;font-weight:700;">op</div>
<div class="a" style="left:1385.4px;top:517.6px;width:33.6px;height:15.8px;background:#2b2b2b;border:1px solid #454545;border-radius:3px"></div>
<div class="t" style="left:1402.4px;transform:translateX(-50%);top:521.6px;font-size:9.2px;color:#e6e6e6;font-weight:700;">emiss</div>
<div class="a" style="left:1255.7px;top:541.4px;width:228.1px;height:25.5px;background:#2a2a2a;border:1px solid #404040;border-radius:3px"></div>
<div class="t" style="left:1369.5px;transform:translateX(-50%);top:543.8px;font-size:9.6px;color:#dedede;font-weight:700;">Material mode</div>
<div class="t" style="left:1369.5px;transform:translateX(-50%);top:557.8px;font-size:8.5px;color:#cfcfcf;">No Resource Selected</div>
<div class="a" style="left:1255.7px;top:587.0px;width:104.3px;height:1.0px;background:#2a2a2a"></div>
<div class="a" style="left:1379.0px;top:587.0px;width:104.8px;height:1.0px;background:#2a2a2a"></div>
<div class="t" style="left:1369.2px;transform:translateX(-50%);top:583.9px;font-size:8.6px;color:#bdbdbd;">Or</div>
<div class="a" style="left:1255.7px;top:600.0px;width:228.1px;height:31.3px;background:#2a2a2a;border:1px solid #404040;border-radius:3px"></div>
<div class="t" style="left:1289.3px;top:603.5px;font-size:9.2px;color:#e2e2e2;font-weight:700;">Base color</div>
<div class="t" style="left:1289.3px;top:620.5px;font-size:8.6px;color:#d6d6d6;letter-spacing:-0.1px;">Anneli head premade texture</div>
<div class="a" style="left:1498.0px;top:90.2px;width:9.0px;height:755.8px;background:#262626"></div>
<div class="a" style="left:1498.8px;top:91.0px;width:7.5px;height:507.0px;background:#404040"></div>
<svg style="left:0;top:0" width="1536" height="864"><line x1="1325" y1="239.8" x2="1339.3" y2="239.8" stroke="#cfcfcf" stroke-width="1.8"/><line x1="1351.3" y1="239.8" x2="1483.6" y2="239.8" stroke="#474747" stroke-width="1.2"/><circle cx="1345.3" cy="239.8" r="3.9" fill="none" stroke="#cfcfcf" stroke-width="1.4"/><polyline points="1257.5,254.5 1260.6,257.6 1263.7,254.5" stroke="#bdbdbd" stroke-width="1" fill="none"/><polyline points="1474,256 1476.5,258.8 1481,252.8" stroke="#2a2a2a" stroke-width="1.6" fill="none"/><line x1="1324" y1="287" x2="1434.5" y2="287" stroke="#cfcfcf" stroke-width="1.8"/><line x1="1446.5" y1="287" x2="1483.6" y2="287" stroke="#474747" stroke-width="1.2"/><circle cx="1440.5" cy="287" r="3.9" fill="none" stroke="#cfcfcf" stroke-width="1.4"/><polyline points="1257.5,305 1260.6,308.1 1263.7,305" stroke="#bdbdbd" stroke-width="1" fill="none"/><circle cx="1477.6" cy="328" r="4.8" fill="#a8a8a8"/><rect x="1477" y="326.5" width="1.3" height="4" fill="#333"/><circle cx="1477.6" cy="325" r="0.8" fill="#333"/><line x1="1304.4" y1="361.5" x2="1336.4" y2="361.5" stroke="#cfcfcf" stroke-width="1.8"/><line x1="1348.4" y1="361.5" x2="1371" y2="361.5" stroke="#474747" stroke-width="1.2"/><circle cx="1342.4" cy="361.5" r="3.9" fill="none" stroke="#cfcfcf" stroke-width="1.4"/><path d="M1382.3,352 V350 A3.3,3.3 0 0 1 1388.9,350 V352" stroke="#e0e0e0" stroke-width="1.3" fill="none"/><rect x="1380.8" y="352" width="9.6" height="7" rx="1" fill="#e0e0e0"/><circle cx="1385.6" cy="355.3" r="0.9" fill="#4a4a4a"/><line x1="1400" y1="361.5" x2="1433.2" y2="361.5" stroke="#4a4a4a" stroke-width="1.2"/><line x1="1445.2" y1="361.5" x2="1467.8" y2="361.5" stroke="#474747" stroke-width="1.2"/><circle cx="1439.2" cy="361.5" r="3.9" fill="none" stroke="#5a5a5a" stroke-width="1.4"/><line x1="1316" y1="389.4" x2="1467.8" y2="389.4" stroke="#474747" stroke-width="1.2"/><circle cx="1310.3" cy="389.4" r="3.9" fill="none" stroke="#cfcfcf" stroke-width="1.4"/><line x1="1304.4" y1="417.6" x2="1331.4" y2="417.6" stroke="#cfcfcf" stroke-width="1.8"/><line x1="1343.4" y1="417.6" x2="1371" y2="417.6" stroke="#474747" stroke-width="1.2"/><circle cx="1337.4" cy="417.6" r="3.9" fill="none" stroke="#cfcfcf" stroke-width="1.4"/><line x1="1400" y1="417.6" x2="1428.3" y2="417.6" stroke="#cfcfcf" stroke-width="1.8"/><line x1="1440.3" y1="417.6" x2="1467.8" y2="417.6" stroke="#474747" stroke-width="1.2"/><circle cx="1434.3" cy="417.6" r="3.9" fill="none" stroke="#cfcfcf" stroke-width="1.4"/><polyline points="1259,434 1262,437 1259,440" stroke="#bdbdbd" stroke-width="1" fill="none"/><g fill="#c8c8c8"><rect x="1467.5" y="472.5" width="10" height="1.3"/><rect x="1467.5" y="475" width="10" height="1.3"/><rect x="1467.5" y="477.5" width="4" height="1.3"/></g><polyline points="1473,478.5 1475,480.5 1477,478.5" stroke="#c8c8c8" stroke-width="1" fill="none"/><g stroke="#4a4a4a" stroke-width="3.3" fill="none"><path d="M1272.5,627.5 A11.5,11.5 0 0 1 1264.5,607.5"/><path d="M1271.5,604.5 A11.5,11.5 0 0 1 1278.8,624"/></g><polygon points="1260.8,604.8 1267.6,604.6 1267.4,611" fill="#4a4a4a"/><polygon points="1276.5,620.5 1282.8,627.2 1276.2,627.4" fill="#4a4a4a"/><g stroke="#d0d0d0" stroke-width="1.1"><line x1="1469" y1="612.5" x2="1476" y2="619.5"/><line x1="1476" y1="612.5" x2="1469" y2="619.5"/></g><g stroke-dasharray="0.8,0.6" stroke="#1e1e1e"><line x1="1514" y1="52.5" x2="1530" y2="52.5"/></g>
<g fill="#d0d0d0"><rect x="1515" y="72.5" width="13" height="9.5" rx="1"/><rect x="1518.5" y="83" width="6" height="1.2"/><circle cx="1521.5" cy="77.2" r="2.6" fill="#333"/><circle cx="1521.5" cy="77.2" r="1.4"/>
<circle cx="1521.5" cy="103" r="6.3"/><circle cx="1523.5" cy="105.3" r="3.3" fill="#333"/><circle cx="1523.5" cy="105.3" r="2.2"/><circle cx="1523.5" cy="105.3" r="0.9" fill="#333"/><path d="M1517,100 A5,5 0 0 1 1521,97.5" stroke="#333" stroke-width="1" fill="none"/></g>
<g stroke="#d0d0d0" stroke-width="1.3" fill="none"><path d="M1516.3,131 A6,6 0 1 0 1516,126"/><polyline points="1521.5,125 1521.5,129 1524,131.5"/><polyline points="1514.5,129.5 1516.3,131.5 1518.5,130"/>
<rect x="1515.5" y="148" width="12" height="12.5" rx="1"/><line x1="1518" y1="151.5" x2="1525" y2="151.5"/><line x1="1518" y1="154.3" x2="1525" y2="154.3"/><line x1="1518" y1="157" x2="1525" y2="157"/></g></svg>
<!--PROPS_END-->
<!-- status bar -->
<div class="a" style="left:0;top:846px;width:1536px;height:1px;background:#202020"></div>
<div class="a" style="left:0;top:847px;width:1536px;height:17px;background:#343434"></div>
<div class="a" style="left:0;top:862px;width:38px;height:2px;background:#262626"></div>
<div class="a" style="left:38px;top:862px;width:276px;height:2px;background:#585858"></div>
<div class="a" style="left:433px;top:863px;width:38px;height:1px;background:#4a4a48"></div>
<div class="t" style="right:8.8px;top:851.4px;font-size:9px;color:#d0d0d0">Cache Disk Usage:&nbsp;&nbsp; 61% | Version: 8.1.1</div>
<!-- material dropdown in viewport -->
<div class="a" style="left:838px;top:73.5px;width:131px;height:20.7px;background:#262626;border:1px solid #3e3e3e;border-radius:3px"></div>
<div class="t" style="left:842.6px;top:80.1px;font-size:9px;color:#d4d4d4;letter-spacing:-0.2px">Material</div>
<svg style="left:956px;top:81px" width="9" height="6"><polyline points="0.8,0.8 4,4.2 7.2,0.8" stroke="#c8c8c8" stroke-width="1.1" fill="none"/></svg>
</body></html>
